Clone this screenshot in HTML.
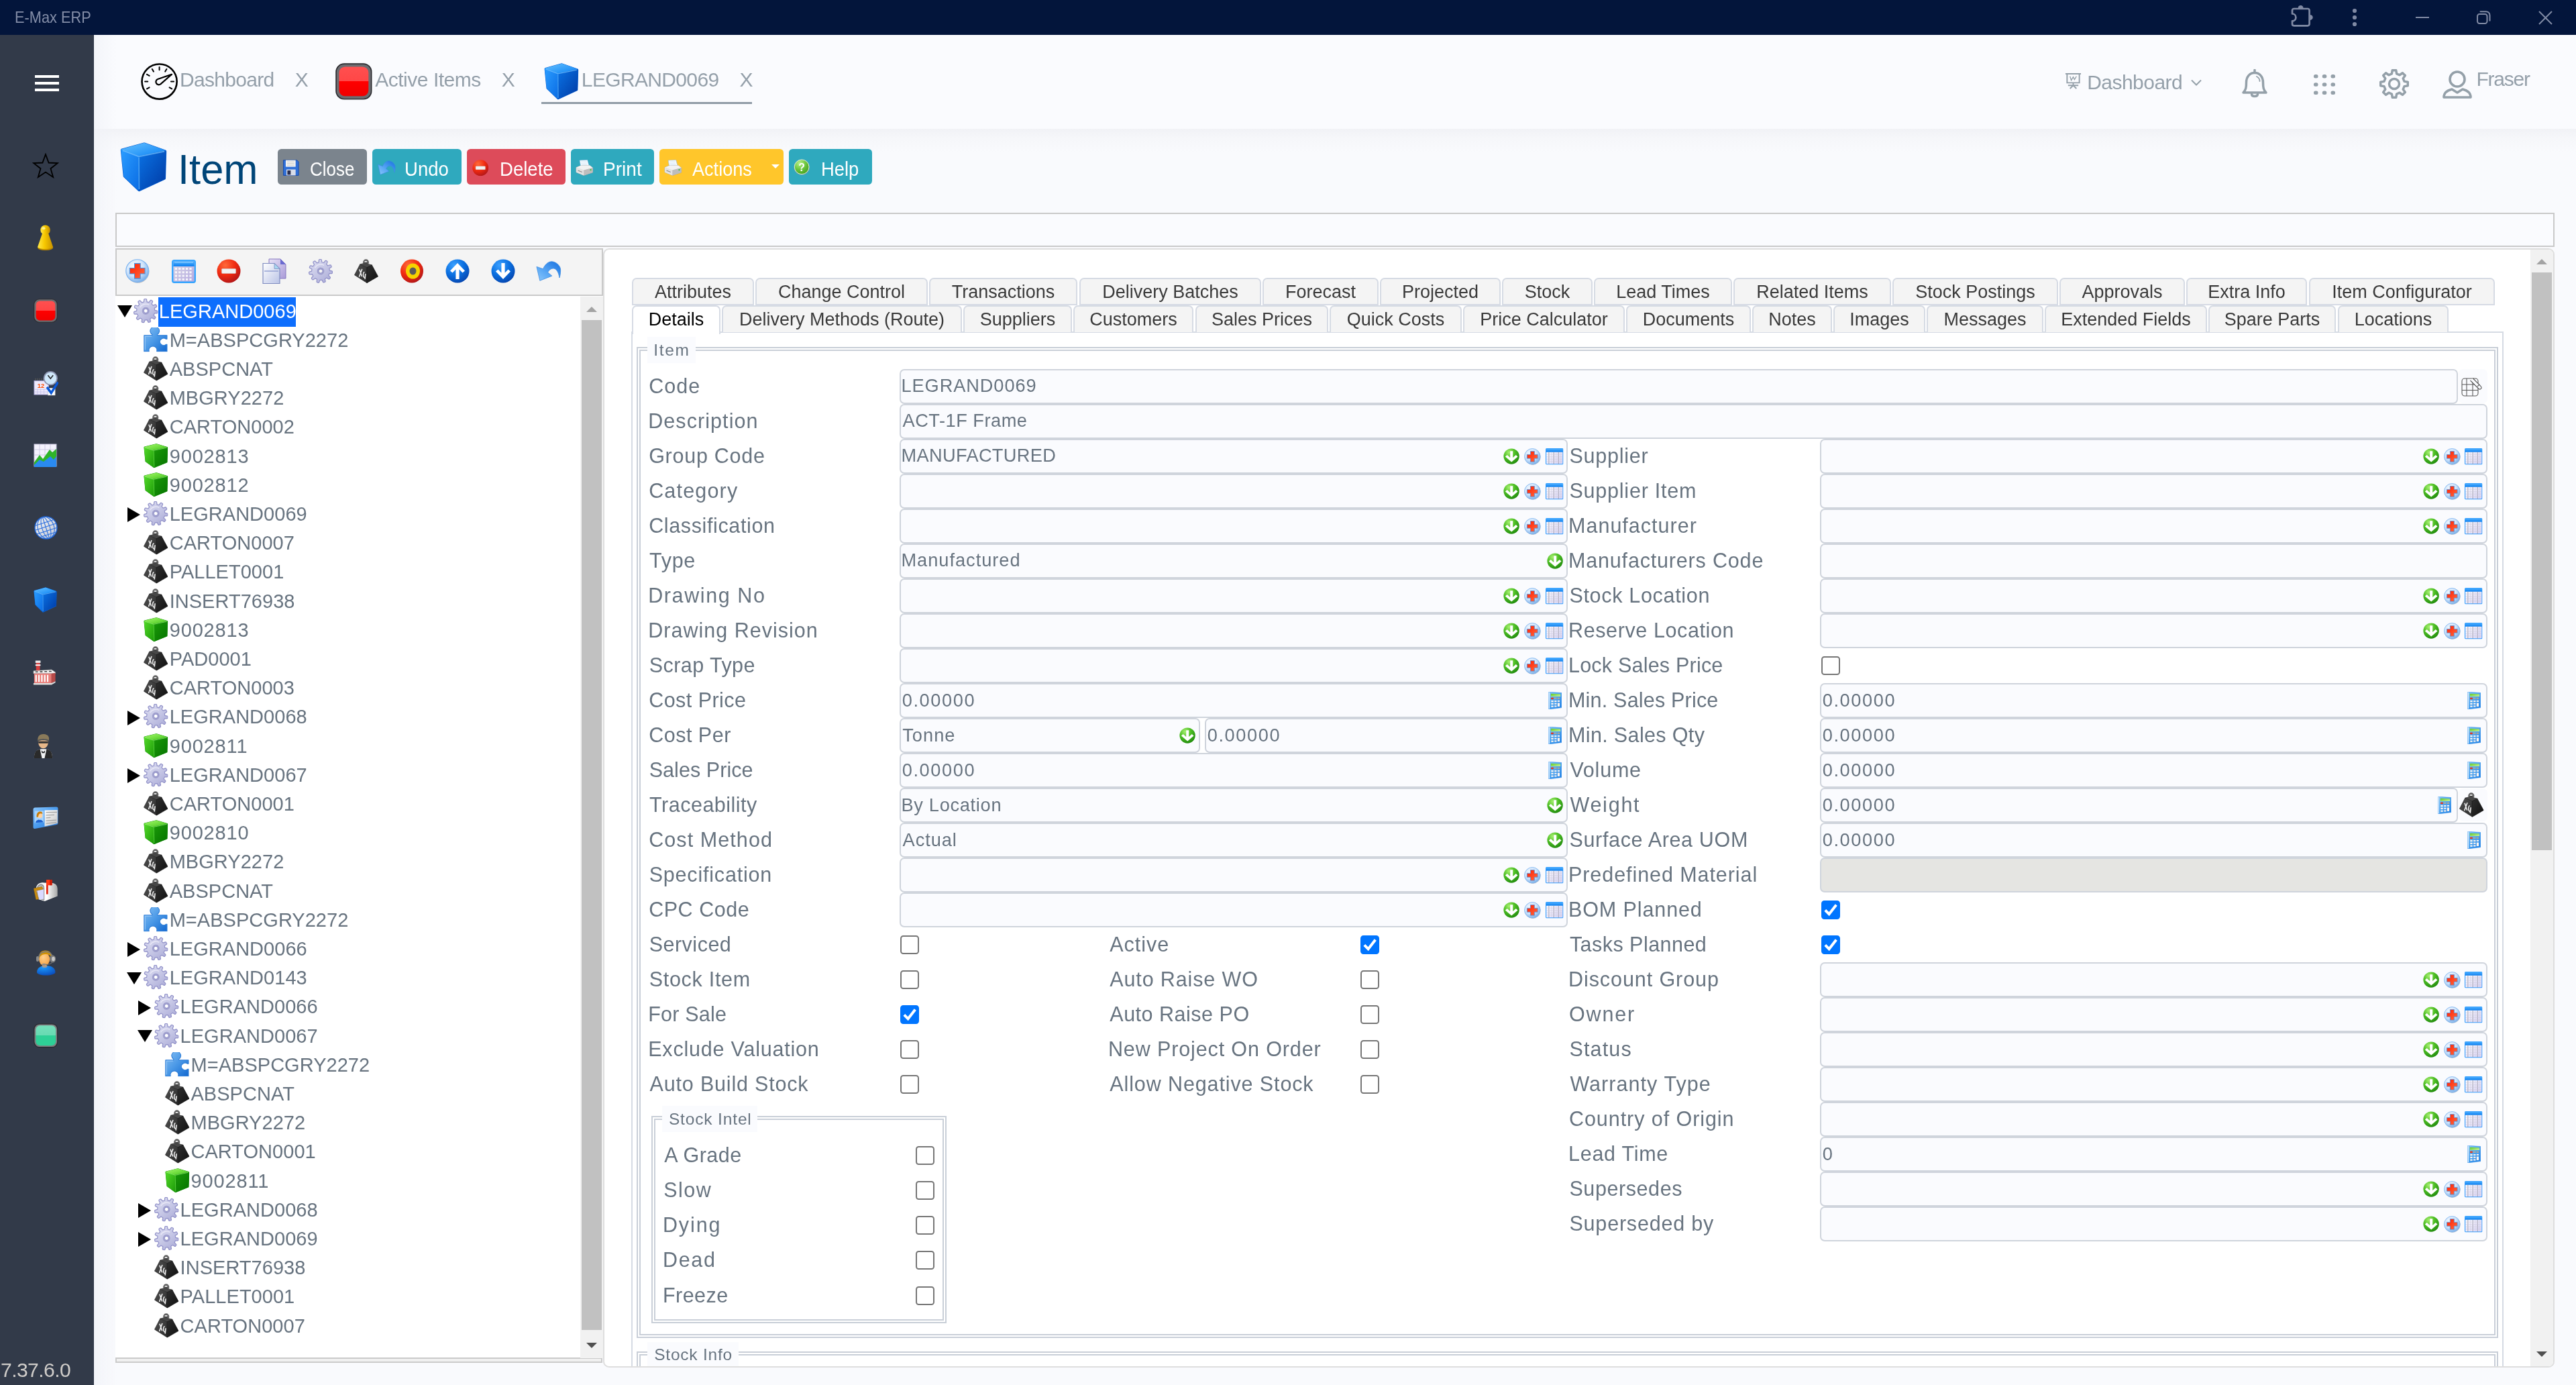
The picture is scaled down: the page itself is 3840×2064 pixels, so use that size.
<!DOCTYPE html><html><head><meta charset="utf-8"><title>E-Max ERP</title><style>
*{box-sizing:border-box;margin:0;padding:0}
html,body{width:3840px;height:2064px;overflow:hidden;background:#f9fafd;font-family:"Liberation Sans",sans-serif;}
.i{position:absolute;overflow:visible}
.abs{position:absolute}
#title{position:absolute;left:0;top:0;width:3840px;height:52px;background:#03153b}
#title .t{position:absolute;color:#848ea8;white-space:nowrap;line-height:30px}
#side{position:absolute;left:0;top:52px;width:140px;height:2012px;background:#323a49}
#ver{position:absolute;left:0;top:2024px;font-size:28px;color:#c3c8d0;white-space:nowrap}
#hdr{position:absolute;left:140px;top:52px;width:3700px;height:140px;background:#fafbfe}
#hshadow{position:absolute;left:140px;top:192px;width:3700px;height:36px;background:linear-gradient(#f1f2f6,#f6f7fa 40%,#f9fafd)}
#lshadow{position:absolute;left:140px;top:52px;width:34px;height:2012px;background:linear-gradient(90deg,rgba(241,243,248,.75),rgba(249,250,253,0))}
.ht{position:absolute;color:#95a0aa;white-space:nowrap;line-height:36px}
.btn{position:absolute;top:222px;height:53px;border-radius:5.5px;color:#fff;font-size:27px;white-space:nowrap}
.legt{position:absolute;color:#687480;white-space:nowrap;line-height:36px}
.fv{position:absolute;color:#687480;white-space:nowrap;line-height:36px}
.bt{position:absolute;color:#fff;white-space:nowrap;line-height:36px}
.lbl{position:absolute;color:#687480;white-space:nowrap;line-height:36px;letter-spacing:.75px}
.fld{position:absolute;height:52px;border:2px solid #cfd4dc;border-radius:7px;background:#fafbfe;font-size:27.2px;color:#687480;line-height:47px;padding-left:2.5px;white-space:nowrap;letter-spacing:.4px}
.cb{position:absolute;width:28px;height:28px;border:2px solid #767676;border-radius:4.5px;background:#fff}
.cb.on{background:#0075ff;border-color:#0075ff}
.tab{position:absolute;height:40px;border:2px solid #d6dbe4;border-bottom:none;border-radius:7px 7px 0 0;background:#f4f4f4;font-size:27px;color:#3a3a3a;text-align:center;line-height:38px;white-space:nowrap}
.tab.r1{top:414px;height:41px;border-bottom:2px solid #d6dbe4}
.tab.r2{top:455px;height:40px}
.tab.act{background:#fff;color:#000;height:43px;z-index:3}
.tr{position:absolute;font-size:29px;color:#687480;white-space:nowrap;line-height:43px;letter-spacing:.03px}
.tri{position:absolute;width:0;height:0}
.leg{position:absolute;background:#fafbfe;color:#5c6873;font-size:24.5px;white-space:nowrap;letter-spacing:.4px}
</style></head><body>
<div id="root" style="position:absolute;left:0;top:0;width:3840px;height:2064px;will-change:transform;transform:translateZ(0)">

<svg width="0" height="0" style="position:absolute">
<defs>
<radialGradient id="gGreen" cx="35%" cy="25%" r="80%"><stop offset="0" stop-color="#a6f070"/><stop offset=".45" stop-color="#4fbf26"/><stop offset="1" stop-color="#1f8a0c"/></radialGradient>
<radialGradient id="gPlus" cx="40%" cy="35%" r="70%"><stop offset="0" stop-color="#ffffff"/><stop offset=".55" stop-color="#cfe4fb"/><stop offset="1" stop-color="#6fa8e6"/></radialGradient>
<linearGradient id="gRedX" x1="0" y1="0" x2="1" y2="1"><stop offset="0" stop-color="#ff1e00"/><stop offset="1" stop-color="#ff6a40"/></linearGradient>
<linearGradient id="gTbl" x1="0" y1="0" x2="1" y2="1"><stop offset="0" stop-color="#ffffff"/><stop offset="1" stop-color="#d9d3f5"/></linearGradient>
<linearGradient id="gTbl2" x1="0" y1="0" x2="1" y2="1"><stop offset="0" stop-color="#d8d8e6"/><stop offset="1" stop-color="#b4a8e0"/></linearGradient><linearGradient id="gTblH" x1="0" y1="0" x2="0" y2="1"><stop offset="0" stop-color="#4fb0ff"/><stop offset="1" stop-color="#0b7ff0"/></linearGradient>
<linearGradient id="gCalc" x1="0" y1="0" x2="1" y2="1"><stop offset="0" stop-color="#8ccaf8"/><stop offset=".5" stop-color="#4aa2f0"/><stop offset="1" stop-color="#1c7ce2"/></linearGradient>
<radialGradient id="gRedB" cx="35%" cy="25%" r="85%"><stop offset="0" stop-color="#ff6a3a"/><stop offset=".5" stop-color="#f02a10"/><stop offset="1" stop-color="#a8141a"/></radialGradient>
<radialGradient id="gBlueB" cx="35%" cy="25%" r="85%"><stop offset="0" stop-color="#3aa0ff"/><stop offset=".5" stop-color="#0a6fe0"/><stop offset="1" stop-color="#0540a8"/></radialGradient>
<linearGradient id="gGear" x1="0" y1="0" x2="1" y2="1"><stop offset="0" stop-color="#dedff2"/><stop offset=".5" stop-color="#c6c7e6"/><stop offset="1" stop-color="#a6a6d4"/></linearGradient>
<linearGradient id="gPuz" x1="0" y1="0" x2="1" y2="1"><stop offset="0" stop-color="#86c0f4"/><stop offset=".5" stop-color="#4a98e6"/><stop offset="1" stop-color="#1268d0"/></linearGradient>
<linearGradient id="gcT" x1="0" y1="0" x2="1" y2="1"><stop offset="0" stop-color="#a4f86a"/><stop offset="1" stop-color="#3fc418"/></linearGradient>
<linearGradient id="gcL" x1="0" y1="0" x2="1" y2="1"><stop offset="0" stop-color="#52d828"/><stop offset="1" stop-color="#1c9a08"/></linearGradient>
<linearGradient id="gcR" x1="0" y1="0" x2="1" y2="1"><stop offset="0" stop-color="#1a9a08"/><stop offset="1" stop-color="#067400"/></linearGradient>
<linearGradient id="bcT" x1="0" y1="0" x2="1" y2="1"><stop offset="0" stop-color="#62c0ff"/><stop offset="1" stop-color="#0a80f4"/></linearGradient>
<linearGradient id="bcL" x1="0" y1="0" x2="1" y2="1"><stop offset="0" stop-color="#2a9cff"/><stop offset="1" stop-color="#0a6ce4"/></linearGradient>
<linearGradient id="bcR" x1="0" y1="0" x2="1" y2="1"><stop offset="0" stop-color="#0a72e4"/><stop offset="1" stop-color="#003aa4"/></linearGradient>
<linearGradient id="gUndo" x1="1" y1="0" x2="0" y2="1"><stop offset="0" stop-color="#1570e0"/><stop offset=".6" stop-color="#5aa8f5"/><stop offset="1" stop-color="#8cc8fb"/></linearGradient>
<linearGradient id="gRedSq" x1="0" y1="0" x2="0" y2="1"><stop offset="0" stop-color="#ff5050"/><stop offset=".5" stop-color="#ff4646"/><stop offset=".5" stop-color="#ff0000"/><stop offset="1" stop-color="#f00000"/></linearGradient>
<linearGradient id="gGrnSq" x1="0" y1="0" x2="0" y2="1"><stop offset="0" stop-color="#74dfba"/><stop offset=".5" stop-color="#68dab2"/><stop offset=".5" stop-color="#2ecf96"/><stop offset="1" stop-color="#2ecf96"/></linearGradient>
<linearGradient id="gPawn" x1="0" y1="0" x2="1" y2="0"><stop offset="0" stop-color="#ffe94a"/><stop offset=".45" stop-color="#f7c800"/><stop offset="1" stop-color="#c79000"/></linearGradient>
<linearGradient id="gCard" x1="0" y1="0" x2="1" y2="1"><stop offset="0" stop-color="#8cc8ff"/><stop offset=".5" stop-color="#4a9cf0"/><stop offset="1" stop-color="#2a7ce0"/></linearGradient><linearGradient id="gCardW" x1="0" y1="0" x2="1" y2="1"><stop offset="0" stop-color="#ffffff"/><stop offset="1" stop-color="#c4c4c4"/></linearGradient><linearGradient id="gMail" x1="0" y1="0" x2="1" y2="0"><stop offset="0" stop-color="#f4f4f4"/><stop offset=".5" stop-color="#ffffff"/><stop offset="1" stop-color="#a8a8a8"/></linearGradient><radialGradient id="gSupB" cx="35%" cy="20%" r="90%"><stop offset="0" stop-color="#1a9aff"/><stop offset="1" stop-color="#0a48b8"/></radialGradient><radialGradient id="gFace" cx="40%" cy="35%" r="75%"><stop offset="0" stop-color="#ffd08a"/><stop offset="1" stop-color="#f4a040"/></radialGradient><linearGradient id="gDoc" x1="0" y1="0" x2="1" y2="1"><stop offset="0" stop-color="#ffffff"/><stop offset="1" stop-color="#b9c3e6"/></linearGradient>
<linearGradient id="gDoc2" x1="0" y1="0" x2="1" y2="1"><stop offset="0" stop-color="#e8e2f6"/><stop offset="1" stop-color="#a99ad8"/></linearGradient>
<radialGradient id="gHelp" cx="35%" cy="25%" r="85%"><stop offset="0" stop-color="#b8f08a"/><stop offset=".5" stop-color="#6cc63c"/><stop offset="1" stop-color="#3f9a1c"/></radialGradient>
<linearGradient id="gWtL" x1="0" y1="0" x2="1" y2="1"><stop offset="0" stop-color="#505050"/><stop offset="1" stop-color="#2a2a2a"/></linearGradient><linearGradient id="gWtR" x1="0" y1="0" x2="1" y2="1"><stop offset="0" stop-color="#2e2e2e"/><stop offset="1" stop-color="#101010"/></linearGradient><linearGradient id="gLcd" x1="0" y1="0" x2="1" y2="1"><stop offset="0" stop-color="#5ec81e"/><stop offset="1" stop-color="#c8f2a8"/></linearGradient><linearGradient id="gWt" x1="0" y1="0" x2="1" y2="0"><stop offset="0" stop-color="#4a4a4a"/><stop offset="1" stop-color="#1c1c1c"/></linearGradient>
<linearGradient id="gGlobe" x1="0" y1="0" x2="1" y2="1"><stop offset="0" stop-color="#f4f4f4"/><stop offset="1" stop-color="#c4c8d4"/></linearGradient>

<symbol id="i-down" viewBox="0 0 24 24"><circle cx="12" cy="12" r="11.6" fill="url(#gGreen)"/><path d="M2.8,12.4 L5.6,9.9 L10.1,13.8 L10.1,4.1 L14.1,4.1 L14.1,13.8 L18.6,9.9 L21.4,12.4 L12.1,20.4Z" fill="#fff"/></symbol>
<symbol id="i-plus" viewBox="0 0 24 24"><circle cx="12.300" cy="12.500" r="11.300" fill="#70757e" opacity=".45"/><circle cx="11.800" cy="11.800" r="11.300" fill="url(#gPlus)" stroke="#7db4f0" stroke-width=".8"/><path d="M9,4.400h5.800v4.600h4.600v5.600h-4.600v4.800h-5.800v-4.800h-4.800v-5.600h4.800z" fill="url(#gRedX)" stroke="#3a96ee" stroke-width=".7"/></symbol>
<symbol id="i-table" viewBox="0 0 24 22"><rect x=".5" y=".5" width="23" height="21" rx="1" fill="url(#gTbl)" stroke="#2f9bff" stroke-width="1"/><rect x=".5" y=".5" width="23" height="4.6" fill="url(#gTblH)"/><path d="M4.4,5v16.4M11,5v16.4M17.4,5v16.4" stroke="#8c8c96" stroke-width=".7"/><path d="M1,8.2h22M1,11.4h22M1,14.6h22M1,17.8h22M7.7,5v16M14.2,5v16M20.6,5v16" stroke="#c9c6dc" stroke-width=".45"/></symbol>
<symbol id="i-table2" viewBox="0 0 36 35"><rect x="1.200" y="1.200" width="33.600" height="32.600" rx="2.500" fill="url(#gTbl2)" stroke="#36a6ff" stroke-width="2.400"/><rect x="2.400" y="2.400" width="31.200" height="7.600" fill="url(#gTblH)"/><path d="M4,4.200h28" stroke="#8fd0ff" stroke-width="1.200"/><g fill="#ffffff" opacity=".85"><rect x="4.800" y="12" width="3.200" height="3"/><rect x="10.200" y="12" width="3.200" height="3"/><rect x="15.600" y="12" width="3.200" height="3"/><rect x="21" y="12" width="3.200" height="3"/><rect x="26.400" y="12" width="3.200" height="3"/><rect x="4.800" y="17.300" width="3.200" height="3"/><rect x="10.200" y="17.300" width="3.200" height="3"/><rect x="15.600" y="17.300" width="3.200" height="3"/><rect x="21" y="17.300" width="3.200" height="3"/><rect x="26.400" y="17.300" width="3.200" height="3"/><rect x="4.800" y="22.600" width="3.200" height="3"/><rect x="10.200" y="22.600" width="3.200" height="3"/><rect x="15.600" y="22.600" width="3.200" height="3"/><rect x="21" y="22.600" width="3.200" height="3"/><rect x="26.400" y="22.600" width="3.200" height="3"/><rect x="4.800" y="27.900" width="3.200" height="3"/><rect x="10.200" y="27.900" width="3.200" height="3"/><rect x="15.600" y="27.900" width="3.200" height="3"/><rect x="21" y="27.900" width="3.200" height="3"/><rect x="26.400" y="27.900" width="3.200" height="3"/></g></symbol>
<symbol id="i-calc" viewBox="0 0 20 26"><path d="M0.300,1.200 Q0.300,0.200 1.500,0.200 L19.800,1.500 V23.600 L1.500,25.900 Q0.300,25.900 0.300,24.800Z" fill="url(#gCalc)" stroke="#2f8ae6" stroke-width=".5"/><path d="M0.600,1 L1.900,0.600 V25.500 L0.600,25Z" fill="#e6f2fd"/><path d="M3.800,2.700 L18.100,3.200 V7 L3.800,6.900Z" fill="url(#gLcd)"/><rect x="4" y="8.600" width="3.800" height="2.600" fill="#e23a1c"/><rect x="9.200" y="8.600" width="3.200" height="2.500" fill="#a8a8a0"/><rect x="13.800" y="8.600" width="3.200" height="2.400" fill="#a8a8a0"/><g fill="#fdf6f0"><rect x="4.300" y="13" width="3.300" height="2.200"/><rect x="9.200" y="13" width="3.200" height="2.100"/><rect x="13.800" y="12.800" width="3.200" height="2.100"/><rect x="4.300" y="16.800" width="3.300" height="2.200"/><rect x="9.200" y="16.700" width="3.200" height="2.100"/><rect x="13.800" y="16.500" width="3.200" height="5.400"/><rect x="4.300" y="20.600" width="3.300" height="2.200"/><rect x="9.200" y="20.400" width="3.200" height="2.100"/></g></symbol>
<symbol id="i-weight" viewBox="0 0 36 36"><ellipse cx="17.500" cy="5" rx="4.500" ry="4.700" fill="#626262"/><ellipse cx="17.500" cy="5.400" rx="2" ry="2.300" fill="#3e3e3e"/><ellipse cx="17.300" cy="4" rx="2.100" ry="1" fill="#f2f2f2"/><path d="M8.600,8.200 L15.500,6.400 L26.400,9.200 L19,12.600Z" fill="#484848" stroke="#484848" stroke-width="1.200" stroke-linejoin="round"/><path d="M8.600,8.200 L19,12.600 L19,35.600 L0.500,23.800Z" fill="url(#gWtL)" stroke="#2c2c2c" stroke-width=".8" stroke-linejoin="round"/><path d="M19,12.600 L26.400,9.200 L35.500,26 L19,35.600Z" fill="url(#gWtR)" stroke="#181818" stroke-width=".8" stroke-linejoin="round"/><path d="M8,16 L11.300,25.500 M11.600,15.400 L7.600,26 M14.800,19.500 C13,20.500 13,26.500 15,27.500 M16.800,22.500 L16,29.500" stroke="#ededed" stroke-width="1.600" fill="none" stroke-linecap="round"/></symbol>
<symbol id="i-gear" viewBox="0 0 36 36"><g transform="rotate(6 18 18)"><path d="M31.20,15.72 L34.69,16.08 L35.56,16.79 L35.56,19.21 L34.69,19.92 L31.20,20.28 L30.34,23.22 L33.08,25.41 L33.42,26.48 L32.12,28.51 L31.01,28.63 L27.87,27.06 L25.56,29.06 L26.68,32.39 L26.39,33.47 L24.20,34.47 L23.19,33.98 L21.41,30.96 L18.38,31.39 L17.52,34.79 L16.69,35.55 L14.31,35.21 L13.73,34.25 L13.86,30.74 L11.08,29.48 L8.52,31.87 L7.41,32.06 L5.59,30.48 L5.62,29.36 L7.63,26.48 L5.97,23.91 L2.53,24.54 L1.49,24.10 L0.81,21.79 L1.45,20.86 L4.69,19.53 L4.69,16.47 L1.45,15.14 L0.81,14.21 L1.49,11.90 L2.53,11.46 L5.97,12.09 L7.63,9.52 L5.62,6.64 L5.59,5.52 L7.41,3.94 L8.52,4.13 L11.08,6.52 L13.86,5.26 L13.73,1.75 L14.31,0.79 L16.69,0.45 L17.52,1.21 L18.38,4.61 L21.41,5.04 L23.19,2.02 L24.20,1.53 L26.39,2.53 L26.68,3.61 L25.56,6.94 L27.87,8.94 L31.01,7.37 L32.12,7.49 L33.42,9.52 L33.08,10.59 L30.34,12.78Z M14.90,18.00 a3.10,3.10 0 1,0 6.20,0 a3.10,3.10 0 1,0 -6.20,0Z" fill="url(#gGear)" stroke="#9090c8" stroke-width="1.200" stroke-linejoin="round" fill-rule="evenodd"/><circle cx="18" cy="18" r="4.600" fill="none" stroke="#9494c6" stroke-width="1.600" opacity=".8"/><path d="M9,14 A10,10 0 0,1 22,8.800" fill="none" stroke="#ecebf8" stroke-width="1.400" opacity=".9"/></g></symbol>
<symbol id="i-puzzle" viewBox="0 0 36 36"><path d="M0.800,11.500 H12.600 V10.200 A6.800,6.200 0 1,1 20.400,10.200 V11.500 H34.500 V17 H33 A5.500,5.100 0 1,0 33,25 H34.500 V35.300 H19.500 V34.200 A5.900,5.300 0 1,0 8,34.200 V35.300 H0.800Z" fill="url(#gPuz)" stroke="#2b7bd6" stroke-width="1" stroke-linejoin="round"/><path d="M2.300,33 V13 H12" fill="none" stroke="#a8d2fa" stroke-width=".9" opacity=".9"/></symbol>
<symbol id="i-gcube" viewBox="0 0 36 36" preserveAspectRatio="none"><path d="M1.700,5.700 L18.800,1.400 L34.500,6.200 L33.800,27 L15.600,34.500 L3.700,26Z" fill="#129008" stroke="#129008" stroke-width="2.400" stroke-linejoin="round"/><path d="M1.300,5.400 L18.800,1 L35,5.900 L15,10.200Z" fill="url(#gcT)" stroke="url(#gcT)" stroke-width="1" stroke-linejoin="round"/><path d="M1.200,5.700 L15,10.200 L15.600,35 L3.300,26.300Z" fill="url(#gcL)" stroke="url(#gcL)" stroke-width="1" stroke-linejoin="round"/><path d="M15,10.200 L35,6 L34.300,27.300 L15.600,35Z" fill="url(#gcR)" stroke="url(#gcR)" stroke-width="1" stroke-linejoin="round"/><path d="M15,10.700 L15.600,34.300" stroke="#7af05a" stroke-width=".9" opacity=".7"/><path d="M2,6 L15,10.200 L34.200,6.200" fill="none" stroke="#b8ff9a" stroke-width=".9" opacity=".6"/></symbol>
<symbol id="i-bcube" viewBox="0 0 36 38" preserveAspectRatio="none"><path d="M1.600,6 L18.500,1.400 L34.400,7 L33.800,27.600 L14.600,36.400 L3.600,25.800Z" fill="#0a62d4" stroke="#0a62d4" stroke-width="2.400" stroke-linejoin="round"/><path d="M1.300,5.700 L18.500,1 L34.800,6.700 L14.400,11Z" fill="url(#bcT)" stroke="url(#bcT)" stroke-width="1" stroke-linejoin="round"/><path d="M1.200,6 L14.400,11 L14.600,36.800 L3.300,26Z" fill="url(#bcL)" stroke="url(#bcL)" stroke-width="1" stroke-linejoin="round"/><path d="M14.400,11 L34.800,6.800 L34.200,27.800 L14.600,36.800Z" fill="url(#bcR)" stroke="url(#bcR)" stroke-width="1" stroke-linejoin="round"/><path d="M14.400,11.500 L14.600,36" stroke="#5ab4ff" stroke-width=".9" opacity=".75"/><path d="M2,6.300 L14.400,11 L34,7" fill="none" stroke="#7cc6ff" stroke-width=".9" opacity=".7"/></symbol>
<symbol id="i-minus" viewBox="0 0 36 36"><circle cx="18" cy="18" r="17.500" fill="url(#gRedB)"/><rect x="7.500" y="14.500" width="21" height="7" rx="1" fill="#f2f2f2" stroke="#c8c0c0" stroke-width=".6"/></symbol>
<symbol id="i-copy" viewBox="0 0 36 38"><path d="M10,1 h17 l8,8 v21 h-25Z" fill="url(#gDoc2)" stroke="#8678c0" stroke-width="1"/><path d="M27,1 v8 h8Z" fill="#6a6ad0"/><path d="M1,7.500 h17 l8,8 v22 h-25Z" fill="url(#gDoc)" stroke="#7f8cc0" stroke-width="1.200"/><path d="M18,7.500 v8 h8Z" fill="#a8d8f0" stroke="#7f8cc0" stroke-width=".8"/><path d="M3,19h21" stroke="#8f9cd0" stroke-width="1.400"/></symbol>
<symbol id="i-target" viewBox="0 0 36 36"><ellipse cx="18" cy="18" rx="17" ry="17.500" fill="url(#gRedB)"/><ellipse cx="19.500" cy="18" rx="10.500" ry="11.500" fill="#f6d200"/><ellipse cx="19.500" cy="18" rx="5" ry="5.500" fill="#5a5a5a"/></symbol>
<symbol id="i-up" viewBox="0 0 36 36"><circle cx="18" cy="18" r="17.500" fill="url(#gBlueB)"/><path d="M18,6 L29,17.500 L25.500,20.500 L20.600,15.500 V30 H15.400 V15.500 L10.500,20.500 L7,17.500Z" fill="#fff"/></symbol>
<symbol id="i-dn" viewBox="0 0 36 36"><circle cx="18" cy="18" r="17.500" fill="url(#gBlueB)"/><path d="M18,30 L29,18.500 L25.500,15.500 L20.600,20.500 V6 H15.400 V20.500 L10.500,15.500 L7,18.500Z" fill="#fff"/></symbol>
<symbol id="i-undo" viewBox="0 0 40 32"><path d="M0.700,9 L11,12.500 C14,5 20,0.500 25,0.800 C33,1.500 39.500,9 38.800,15 C38.800,20 38,24 37,26.700 C36,20 34,15 30,12.500 C26,10.500 21,13 18.500,18 L25.200,23.600 L5.900,31.200Z" fill="url(#gUndo)" stroke="#3a8ae0" stroke-width=".8" stroke-linejoin="round"/></symbol>
<symbol id="i-redsq" viewBox="0 0 36 36"><rect x=".7" y=".7" width="34.600" height="34.600" rx="8" fill="#6c6c70" stroke="#2a2a2e" stroke-width="1.100"/><rect x="3.600" y="3.600" width="28.800" height="28.800" rx="5.800" fill="url(#gRedSq)"/></symbol>
<symbol id="i-grnsq" viewBox="0 0 36 36"><rect x=".8" y=".8" width="34.400" height="34.400" rx="8" fill="#7c7c80" stroke="#26262a" stroke-width="1.200"/><rect x="3.300" y="3.300" width="29.400" height="29.400" rx="6" fill="url(#gGrnSq)"/></symbol>
<symbol id="i-gauge" viewBox="0 0 54 54"><circle cx="27" cy="27" r="25.500" fill="none" stroke="#000" stroke-width="2.600"/><g stroke="#000" stroke-width="2" stroke-linecap="round"><path d="M27,6v4M16.500,8.800l2,3.500M8.800,16.500l3.500,2M6,27h4M8.800,37.500l3.500,-2M37.500,8.800l-2,3.500M48,27h-4M45.200,37.500l-3.500,-2"/></g><path d="M45,16.500 L28.700,30.700 A4.200,4.200 0 1,1 24.500,23.500 Z" fill="#fafbfe" stroke="#000" stroke-width="2.200" stroke-linejoin="round"/></symbol>
<symbol id="i-star" viewBox="0 0 40 38"><path d="M20,2 L24.600,14.500 L38,15 L27.500,23.200 L31.200,36 L20,28.500 L8.800,36 L12.500,23.200 L2,15 L15.400,14.500Z" fill="none" stroke="#000" stroke-width="1.800" stroke-linejoin="miter"/></symbol>
<symbol id="i-pawn" viewBox="5.5 0.8 25 38.6" preserveAspectRatio="none"><ellipse cx="18" cy="35" rx="11.500" ry="4" fill="#b98600"/><path d="M6.500,34 L14,12 h8 L29.500,34 C26,38 10,38 6.500,34Z" fill="url(#gPawn)"/><circle cx="18" cy="8.500" r="7.200" fill="url(#gPawn)"/><ellipse cx="15.500" cy="6" rx="2.500" ry="2" fill="#fff6a8" opacity=".8"/></symbol>
<symbol id="i-cal" viewBox="0 0 38 38"><rect x="1" y="15" width="22" height="21" fill="#eeeafc" stroke="#a9a3d6" stroke-width="1"/><path d="M3,14v-3M6,14v-3M9,14v-3M12,14v-3M15,14v-3" stroke="#555" stroke-width="1.400"/><path d="M2,28h20M2,32h20M6,27v9M11,27v9M16,27v9" stroke="#c3bee6" stroke-width=".8"/><text x="6" y="26" font-family="Liberation Sans, sans-serif" font-weight="bold" font-size="9.500" fill="#ff4e00">12</text><rect x="22" y="26" width="11" height="11" fill="#fff" stroke="#bbb" stroke-width=".6"/><path d="M20.500,24.500 L27,33.500 L37.500,17" fill="none" stroke="#0a58d8" stroke-width="3.600"/><circle cx="26" cy="11" r="10" fill="#cfe8fb" stroke="#8c94b0" stroke-width="1.800"/><path d="M22,6.500 L26,11.500 L30,6.500" fill="none" stroke="#222" stroke-width="1.600"/></symbol>
<symbol id="i-chart" viewBox="0 0 36 36"><rect x="1" y="1" width="33" height="33" fill="#f4f2fd" stroke="#c9c6e0" stroke-width="1"/><path d="M1,9h33M1,17h33M1,25h33M9,1v33M17,1v33M25,1v33" stroke="#c9c6e0" stroke-width=".9"/><path d="M1,28 L9,17 L14,23 L24,9 L28,13 L34,8 V34 H1Z" fill="#2fb52a"/><path d="M1,32 L9,24 L15,27 L25,19 L30,24 L34,19 V35 H1Z" fill="#2a8af0"/></symbol>
<symbol id="i-globe" viewBox="0 0 36 36"><circle cx="18" cy="18" r="17" fill="url(#gGlobe)" stroke="#1d62d4" stroke-width="1.400"/><g fill="none" stroke="#2a6ede" stroke-width="1.100" transform="rotate(-18 18 18)"><ellipse cx="18" cy="18" rx="6" ry="17"/><ellipse cx="18" cy="18" rx="12.500" ry="17"/><path d="M18,1v34M3,10h30M1,16.500h34M1.500,23h33M5,29h26"/></g></symbol>
<symbol id="i-factory" viewBox="0 0 38 40"><rect x="6" y="3" width="6" height="14" fill="#d84040"/><rect x="5" y="1" width="8" height="3.500" fill="#eee"/><rect x="5" y="7" width="8" height="2" fill="#fff"/><path d="M2,17 L30,15 L36,19 V21 H2Z" fill="#f4f4f4" stroke="#999" stroke-width=".6"/><path d="M3,21 H30 V36 H3Z" fill="#e87c78"/><path d="M30,21 L36,20 V33 L30,36Z" fill="#b84a48"/><path d="M6,23v11M10.500,23v11M15,23v11M19.500,23v11M24,23v11" stroke="#fff" stroke-width="2.200"/><path d="M5,18.500h4M12,18.300h4M19,18h4M26,17.700h4" stroke="#444" stroke-width="1.600"/><path d="M2,36 H30 L36,33 V35 L30,38.500 H2Z" fill="#ddd"/></symbol>
<symbol id="i-man" viewBox="0 0 36 40"><path d="M4,40 C4,28 10,26 18,26 C26,26 32,28 32,40Z" fill="#f2f2f2"/><path d="M4,40 C4,30 8,27 13,26.500 L16,40Z M32,40 C32,30 28,27 23,26.500 L20,40Z" fill="#2a2a2a"/><path d="M15,28 l3,2.500 l3,-2.500 l-1,4 h-4Z" fill="#222"/><ellipse cx="18" cy="16" rx="7.500" ry="9" fill="#e8b88a"/><path d="M9.500,13 C9,5 14,2.500 19,3 C25,3.500 28,7 26.500,13 C22,10 14,10 9.500,13Z" fill="#8a7a5a"/><path d="M9,12.500 C14,9.500 22,9.500 27,12.500 L27,14.500 C22,12 14,12 9,14.500Z" fill="#555"/><rect x="10.500" y="14" width="15" height="3.200" rx="1.200" fill="#333"/></symbol>
<symbol id="i-card" viewBox="0 0 38 34"><path d="M0.500,4 Q0.500,1.600 3,1.500 L35,0.500 Q37.500,0.500 37.500,3 V24.500 Q37.500,26.500 35.500,27 L3,33 Q0.500,33.300 0.500,31Z" fill="url(#gCard)"/><path d="M17.500,5.500 L36.800,5 V25 L17.500,29.500Z" fill="url(#gCardW)"/><path d="M19.600,8.700 L36,8.300 M19.600,12.800 L32,12.300 M19.600,16.800 L26.500,16.400 M19.600,21.200 L35,20.200 M19.600,25.200 L35,23.700" stroke="#a2a2a2" stroke-width="1.300"/><path d="M2.700,6.600 L16.200,6.300 V23.700 L2.700,24.300Z" fill="#a8d4fc"/><path d="M4,24 C4.500,18 14.500,18 15.500,23.600Z" fill="#1a5fd0"/><circle cx="10.300" cy="13.200" r="3.900" fill="#ffd2a0"/><path d="M5.800,16 C4.500,9 9,6.800 12,7.600 C14,8 14.500,9.500 14.200,11 C12,9.500 9,10 8.400,13.500 C8.200,15 7.500,16 5.800,16Z" fill="#c87c08"/><path d="M9,18.400 L10.300,20 L11.600,18.400Z" fill="#bfe4fb"/></symbol>
<symbol id="i-mail" viewBox="0 0 36 32"><path d="M3.500,28 V14 C3.500,7 9,3.500 15,4.500 L28,5 C33,5.500 35.500,9 35.500,14 V24.500 L16.500,32Z" fill="url(#gMail)"/><path d="M4.600,27.200 V14.500 C4.600,9 8,6.600 11,6.600 C14,6.600 16,9 16,14 V31Z" fill="#8e8e92"/><path d="M6,26 V15 C6,10.500 8.500,8.300 11,8.300 C13.500,8.300 14.800,10.500 14.800,14 V29.800Z" fill="#c2c2c6"/><path d="M5,16.500 L15,14.500 V28.500 L8.500,29.500Z" fill="#dadaff"/><path d="M0,13 L12.300,10.300 L14.200,14 L3.800,16.200 L7.300,29 L3.600,29.600Z" fill="#c98c12" stroke="#9a6a08" stroke-width=".5"/><rect x="18.800" y="1.600" width="2.700" height="20" fill="#e22412"/><rect x="18.800" y="0" width="8.600" height="8.200" fill="#ff3a14"/><path d="M24,0 h3.400 v8.200 h-3.400Z" fill="#c81a08"/></symbol>
<symbol id="i-support" viewBox="0 0 30 38"><path d="M1,33 C1,26 7,23 14.500,23 C22,23 28.500,26 28.500,33 C28.500,35.500 22,37.500 14.500,37.500 C7,37.500 1,35.500 1,33Z" fill="url(#gSupB)"/><ellipse cx="12.500" cy="24" rx="4" ry="2" fill="#9a9a9a"/><ellipse cx="12.200" cy="13.500" rx="8" ry="10" fill="url(#gFace)"/><path d="M4.500,12 C3,3 9,0 14,0.500 C20,1 24,4 23,11 C21,7 17,5.500 13.500,6 C9,6.500 6,8 4.500,12Z" fill="#cf9208"/><path d="M4,10 C5,1 20,-1 24,9" fill="none" stroke="#7a7a7a" stroke-width="1.600"/><rect x="0" y="9" width="4" height="8" rx="2" fill="#8c8c8c"/><ellipse cx="24.500" cy="13" rx="4.600" ry="5.600" fill="#7c7c7c"/><ellipse cx="25.500" cy="13" rx="2.400" ry="3.200" fill="#c8c8c8"/><path d="M24,18 C22,21 17,21.500 12,21.300" fill="none" stroke="#6e6e6e" stroke-width="1.200"/><ellipse cx="11.500" cy="21.300" rx="3" ry="1.600" fill="#8a8a8a"/></symbol>

<symbol id="i-floppy" viewBox="0 0 26 26"><path d="M1.500,1.500 H22 L24.500,4 V24.500 H1.500Z" fill="#2f6fd8" stroke="#1a4aa8" stroke-width="1"/><rect x="5" y="1.500" width="15" height="10" fill="#f2f2f2"/><path d="M7,4h11M7,6.500h11M7,9h11" stroke="#c8c8c8" stroke-width=".9"/><rect x="6" y="15.500" width="14" height="9" fill="#d8dce8"/><rect x="7.500" y="17" width="5" height="6.500" fill="#2a2f50"/></symbol>
<symbol id="i-printer" viewBox="0 0 30 28"><path d="M7,1.500 L20,1 L23,12 L9,13.500Z" fill="#fff" stroke="#9fc4e8" stroke-width=".8"/><path d="M9,4 l10,-.5M9.500,6.500 l10,-.5M10,9 l10,-.5" stroke="#b9d8f2" stroke-width=".8"/><path d="M1,13.500 L8,10.500 L24,10 L29,14 L29,22 L14,27 L1,21.500Z" fill="#d8d8d8" stroke="#999" stroke-width=".6"/><path d="M1,13.500 L14,18 L29,14 L24,10 L8,10.500Z" fill="#f2f2f2"/><path d="M14,18 V27 L1,21.500 V13.500Z" fill="#e2e2e2"/><path d="M14,18 L29,14 V22 L14,27Z" fill="#bdbdbd"/><circle cx="25.500" cy="17.500" r="1.300" fill="#3fc040"/><path d="M4,18.500 l7,2.800" stroke="#888" stroke-width="1.300"/></symbol>
<symbol id="i-help" viewBox="0 0 26 26"><circle cx="13" cy="13" r="12.500" fill="#8a9aa0" opacity=".6"/><circle cx="13" cy="12.600" r="11.600" fill="url(#gHelp)" stroke="#e8f4e0" stroke-width="1"/><text x="13" y="19" text-anchor="middle" font-family="Liberation Sans, sans-serif" font-weight="bold" font-size="17" fill="#fff">?</text></symbol>
<symbol id="i-undo2" viewBox="0 0 40 32"><path d="M0.700,9 L11,12.500 C14,5 20,0.500 25,0.800 C33,1.500 39.500,9 38.800,15 C38.800,20 38,24 37,26.700 C36,20 34,15 30,12.500 C26,10.500 21,13 18.500,18 L25.200,23.600 L5.900,31.200Z" fill="url(#gUndo)" stroke="#3a8ae0" stroke-width=".8" stroke-linejoin="round"/></symbol>

<symbol id="i-bell" viewBox="0 0 40 44"><path d="M20,1.500v4" stroke="#94a0a9" stroke-width="3.500" stroke-linecap="round"/><path d="M3,35 C7,31 7.500,27 7.500,20 C7.500,11 13,5.500 20,5.500 C27,5.500 32.500,11 32.500,20 C32.500,27 33,31 37,35Z" fill="none" stroke="#94a0a9" stroke-width="3.500" stroke-linejoin="round"/><path d="M15.500,37.500 C16,41.500 24,41.500 24.500,37.500" fill="none" stroke="#94a0a9" stroke-width="3.500" stroke-linecap="round"/><path d="M23,11 C26,12.500 27.500,15 27.500,18" fill="none" stroke="#94a0a9" stroke-width="1.800" stroke-linecap="round"/></symbol>
<symbol id="i-grid" viewBox="0 0 32 32"><g fill="#94a0a9"><rect x="0" y="1" width="6.500" height="5.500" rx="2.500"/><rect x="12.800" y="1" width="6.500" height="5.500" rx="2.500"/><rect x="25.500" y="1" width="6.500" height="5.500" rx="2.500"/><rect x="0" y="13.300" width="6.500" height="5.500" rx="2.500"/><rect x="12.800" y="13.300" width="6.500" height="5.500" rx="2.500"/><rect x="25.500" y="13.300" width="6.500" height="5.500" rx="2.500"/><rect x="0" y="25.500" width="6.500" height="5.500" rx="2.500"/><rect x="12.800" y="25.500" width="6.500" height="5.500" rx="2.500"/><rect x="25.500" y="25.500" width="6.500" height="5.500" rx="2.500"/></g></symbol>
<symbol id="i-cog" viewBox="0 0 44 44"><path d="M18.38,6.93 L19.27,1.68 L24.73,1.68 L25.62,6.93 L30.10,8.78 L34.44,5.70 L38.30,9.56 L35.22,13.90 L37.07,18.38 L42.32,19.27 L42.32,24.73 L37.07,25.62 L35.22,30.10 L38.30,34.44 L34.44,38.30 L30.10,35.22 L25.62,37.07 L24.73,42.32 L19.27,42.32 L18.38,37.07 L13.90,35.22 L9.56,38.30 L5.70,34.44 L8.78,30.10 L6.93,25.62 L1.68,24.73 L1.68,19.27 L6.93,18.38 L8.78,13.90 L5.70,9.56 L9.56,5.70 L13.90,8.78Z" fill="none" stroke="#94a0a9" stroke-width="3.500" stroke-linejoin="round"/><circle cx="22" cy="22" r="7.500" fill="none" stroke="#94a0a9" stroke-width="3.500"/></symbol>
<symbol id="i-user" viewBox="0 0 44 42"><circle cx="22" cy="13" r="11" fill="none" stroke="#94a0a9" stroke-width="3.600"/><path d="M2,40 C2,33 8,29.500 14,28 L22,33 L30,28 C36,29.500 42,33 42,40Z" fill="none" stroke="#94a0a9" stroke-width="3.600" stroke-linejoin="round"/></symbol>
<symbol id="i-pres" viewBox="0 0 26 26"><g fill="none" stroke="#94a0a9" stroke-width="2"><path d="M1,2h24M3.500,2v14h19v-14M13,16v4M13,20l-5,5M13,20l5,5M5,20h16"/><path d="M8,6l2,6l3,-5l2,4l3,-5" stroke-width="1.400"/></g></symbol>
<symbol id="i-chev" viewBox="0 0 16 10"><path d="M1,1.500 L8,8.500 L15,1.500" fill="none" stroke="#94a0a9" stroke-width="2"/></symbol>
<symbol id="i-gridbtn" viewBox="0 0 32 32"><g fill="none" stroke="#5a5a5a" stroke-width="1.100"><rect x="1" y="4" width="24" height="26" rx="4"/><path d="M1,13h24M1,21.500h24M8,4v26M17,4v26"/><path d="M14.500,3.500 L27,16 a2.500,2.500 0 0,0 3.500,-3.500 L18,0" fill="#fafbfe" transform="translate(-1,3.500)"/><path d="M25,12.500 l3.300,-3.300" transform="translate(-1,3.500)"/></g></symbol>
</defs></svg>

<div id="title"><div class="t" style="left:21.50px;top:10.5px;font-size:23.4px;transform-origin:0 50%;transform:scaleX(0.9304);">E-Max ERP</div>
<svg class="i" style="left:3412px;top:6px;width:40px;height:40px" viewBox="0 0 40 40"><path d="M7.500,7 H28.100 a2.500,2.500 0 0 1 2.500,2.500 V29.800 a2.500,2.500 0 0 1 -2.500,2.500 H7.500 a2.500,2.500 0 0 1 -2.500,-2.500 V25.300 A5.400,5.400 0 0 0 5,14.500 V9.500 a2.500,2.500 0 0 1 2.500,-2.500Z" fill="none" stroke="#808aa4" stroke-width="2.700" stroke-linejoin="round"/><path d="M13.600,6.500 a4,4.500 0 0 1 8,0Z" fill="#808aa4"/><path d="M31.200,15.900 a4.500,4 0 0 1 0,8Z" fill="#808aa4"/></svg>
<svg class="i" style="left:3500px;top:10px;width:20px;height:32px" viewBox="0 0 20 32"><circle cx="10" cy="6" r="3.100" fill="#808aa4"/><circle cx="10" cy="16" r="3.100" fill="#808aa4"/><circle cx="10" cy="26" r="3.100" fill="#808aa4"/></svg>
<div class="abs" style="left:3601px;top:25px;width:20px;height:2px;background:#808aa4"></div>
<svg class="i" style="left:3690px;top:13px;width:26px;height:26px" viewBox="0 0 26 26"><rect x="3" y="8" width="14.500" height="14" rx="3.200" fill="none" stroke="#808aa4" stroke-width="2"/><path d="M7.500,4.200 h8.500 a5.500,5.500 0 0 1 5.500,5.500 v8" fill="none" stroke="#808aa4" stroke-width="2" stroke-linecap="round"/></svg>
<svg class="i" style="left:3783.5px;top:15.500px;width:21px;height:21px" viewBox="0 0 21 21"><path d="M1,1 L20,20 M20,1 L1,20" stroke="#808aa4" stroke-width="2"/></svg>
</div>
<div id="side"></div>
<div class="abs" style="left:52px;top:112.0px;width:36px;height:3.6px;background:#fff"></div>
<div class="abs" style="left:52px;top:122.2px;width:36px;height:3.6px;background:#fff"></div>
<div class="abs" style="left:52px;top:132.4px;width:36px;height:3.6px;background:#fff"></div>
<svg class="i" style="left:47.5px;top:227.5px;width:40.0px;height:38.0px;"><use href="#i-star"/></svg>
<svg class="i" style="left:54.9px;top:335.4px;width:25.2px;height:38.6px;"><use href="#i-pawn"/></svg>
<svg class="i" style="left:49.5px;top:444.5px;width:36.0px;height:36.0px;"><use href="#i-redsq"/></svg>
<svg class="i" style="left:49.5px;top:552.5px;width:37.0px;height:37.0px;"><use href="#i-cal"/></svg>
<svg class="i" style="left:49.5px;top:661.0px;width:36.0px;height:36.0px;"><use href="#i-chart"/></svg>
<svg class="i" style="left:50.5px;top:768.5px;width:35.0px;height:35.0px;"><use href="#i-globe"/></svg>
<svg class="i" style="left:50.0px;top:875.0px;width:35.0px;height:38.0px;"><use href="#i-bcube"/></svg>
<svg class="i" style="left:48.4px;top:982.5px;width:36.5px;height:39.5px;"><use href="#i-factory"/></svg>
<svg class="i" style="left:46.6px;top:1091.0px;width:35.0px;height:39.0px;"><use href="#i-man"/></svg>
<svg class="i" style="left:48.9px;top:1202.0px;width:38.0px;height:34.0px;"><use href="#i-card"/></svg>
<svg class="i" style="left:50.0px;top:1311.0px;width:36.4px;height:32.0px;"><use href="#i-mail"/></svg>
<svg class="i" style="left:53.8px;top:1416.0px;width:30.0px;height:38.0px;"><use href="#i-support"/></svg>
<svg class="i" style="left:49.5px;top:1525.0px;width:36.5px;height:36.5px;"><use href="#i-grnsq"/></svg>
<div class="abs" style="left:0.98px;top:2023.5px;font-size:30.2px;letter-spacing:-0.626px;color:#cfccc9;white-space:nowrap;line-height:36px;">7.37.6.0</div>
<div id="hdr"></div><div id="hshadow"></div><div id="lshadow"></div>
<svg class="i" style="left:210.3px;top:94.0px;width:55.2px;height:55.2px;"><use href="#i-gauge"/></svg>
<div class="ht" style="left:268.06px;top:101.0px;font-size:30px;letter-spacing:-0.692px;">Dashboard</div>
<div class="ht" style="left:439.73px;top:101.0px;font-size:30px;letter-spacing:0.000px;">X</div>
<svg class="i" style="left:500.3px;top:94.0px;width:54.8px;height:54.8px;"><use href="#i-redsq"/></svg>
<div class="ht" style="left:559.20px;top:101.0px;font-size:30px;letter-spacing:-0.476px;">Active Items</div>
<div class="ht" style="left:747.73px;top:101.0px;font-size:30px;letter-spacing:0.000px;">X</div>
<svg class="i" style="left:811.0px;top:94.3px;width:51.8px;height:54.8px;"><use href="#i-bcube"/></svg>
<div class="ht" style="left:866.86px;top:101.0px;font-size:30px;letter-spacing:-0.651px;">LEGRAND0069</div>
<div class="ht" style="left:1102.53px;top:101.0px;font-size:30px;letter-spacing:0.000px;">X</div>
<div class="abs" style="left:807px;top:152px;width:314px;height:3px;background:#8f9ba6"></div>
<svg class="i" style="left:3078.0px;top:108.0px;width:25.0px;height:25.0px;"><use href="#i-pres"/></svg>
<div class="ht" style="left:3111.26px;top:104.5px;font-size:30px;letter-spacing:-0.542px;">Dashboard</div>
<svg class="i" style="left:3266.0px;top:118.0px;width:16.0px;height:10.0px;"><use href="#i-chev"/></svg>
<svg class="i" style="left:3341.0px;top:103.0px;width:40.0px;height:44.0px;"><use href="#i-bell"/></svg>
<svg class="i" style="left:3449.0px;top:109.5px;width:32.0px;height:32.0px;"><use href="#i-grid"/></svg>
<svg class="i" style="left:3546.5px;top:103.0px;width:44.0px;height:44.0px;"><use href="#i-cog"/></svg>
<svg class="i" style="left:3640.5px;top:104.5px;width:44.0px;height:42.0px;"><use href="#i-user"/></svg>
<div class="ht" style="left:3691.56px;top:100.0px;font-size:30px;letter-spacing:-1.257px;">Fraser</div>
<svg class="i" style="left:179.3px;top:211.5px;width:70.0px;height:74.0px;"><use href="#i-bcube"/></svg>
<div class="abs" style="left:264.80px;top:206.5px;font-size:62.5px;transform-origin:0 50%;transform:scaleX(0.9830);color:#004578;line-height:90px;white-space:nowrap;">Item</div>
<div class="btn" style="left:414px;width:133px;background:#7b848d"></div>
<div class="bt" style="left:461.58px;top:234.0px;font-size:28.6px;transform-origin:0 50%;transform:scaleX(0.9077);">Close</div>
<svg class="i" style="left:421.0px;top:236.8px;width:25.6px;height:26.1px;"><use href="#i-floppy"/></svg>
<div class="btn" style="left:555px;width:133px;background:#2fa9be"></div>
<div class="bt" style="left:603.08px;top:234.0px;font-size:28.6px;transform-origin:0 50%;transform:scaleX(0.9629);">Undo</div>
<svg class="i" style="left:562.5px;top:239.0px;width:27.0px;height:22.0px;"><use href="#i-undo2"/></svg>
<div class="btn" style="left:696px;width:147px;background:#dd4b5a"></div>
<div class="bt" style="left:744.65px;top:234.0px;font-size:28.6px;transform-origin:0 50%;transform:scaleX(0.9637);">Delete</div>
<svg class="i" style="left:703.5px;top:237.5px;width:24.5px;height:24.5px;"><use href="#i-minus"/></svg>
<div class="btn" style="left:851px;width:124px;background:#2fa9be"></div>
<div class="bt" style="left:899.21px;top:234.0px;font-size:28.6px;transform-origin:0 50%;transform:scaleX(0.9811);">Print</div>
<svg class="i" style="left:857.5px;top:236.8px;width:26.5px;height:26.1px;"><use href="#i-printer"/></svg>
<div class="btn" style="left:983px;width:185px;background:#ffc62b"></div>
<div class="bt" style="left:1031.80px;top:234.0px;font-size:28.6px;transform-origin:0 50%;transform:scaleX(0.9473);">Actions</div>
<svg class="i" style="left:989.5px;top:236.8px;width:26.5px;height:26.1px;"><use href="#i-printer"/></svg>
<div class="btn" style="left:1176px;width:124px;background:#2fa9be"></div>
<div class="bt" style="left:1224.36px;top:234.0px;font-size:28.6px;transform-origin:0 50%;transform:scaleX(0.9580);">Help</div>
<svg class="i" style="left:1183.4px;top:237.3px;width:24.3px;height:24.3px;"><use href="#i-help"/></svg>
<div class="tri" style="left:1150.3px;top:245.3px;border-left:6.800px solid transparent;border-right:6.800px solid transparent;border-top:6.800px solid #fff"></div>
<div class="abs" style="left:172px;top:317px;width:3636px;height:51px;border:2px solid #c9c9c9;background:#fafbfe"></div>
<div class="abs" style="left:172px;top:370px;width:727px;height:71px;border:2px solid #c9c9c9;background:#f4f4f4"></div>
<div class="abs" style="left:172px;top:441px;width:727px;height:1583px;background:#fff"></div>
<div class="abs" style="left:172px;top:2023px;width:726px;height:8px;border:2px solid #cbcbcb;background:#f0f0f0"></div>
<svg class="i" style="left:187.3px;top:386.0px;width:36.0px;height:36.0px;"><use href="#i-plus"/></svg>
<svg class="i" style="left:255.9px;top:386.5px;width:36.0px;height:35.0px;"><use href="#i-table2"/></svg>
<svg class="i" style="left:323.4px;top:386.0px;width:36.0px;height:36.0px;"><use href="#i-minus"/></svg>
<svg class="i" style="left:391.4px;top:385.0px;width:36.0px;height:38.0px;"><use href="#i-copy"/></svg>
<svg class="i" style="left:459.5px;top:386.0px;width:36.0px;height:36.0px;"><use href="#i-gear"/></svg>
<svg class="i" style="left:527.5px;top:386.0px;width:36.0px;height:36.0px;"><use href="#i-weight"/></svg>
<svg class="i" style="left:595.6px;top:386.0px;width:36.0px;height:36.0px;"><use href="#i-target"/></svg>
<svg class="i" style="left:663.6px;top:386.0px;width:36.0px;height:36.0px;"><use href="#i-up"/></svg>
<svg class="i" style="left:731.7px;top:386.0px;width:36.0px;height:36.0px;"><use href="#i-dn"/></svg>
<svg class="i" style="left:798.8px;top:389.0px;width:38.0px;height:30.0px;"><use href="#i-undo"/></svg>
<div class="abs" style="left:865px;top:442px;width:34px;height:1582px;background:#f1f1f1"></div>
<div class="abs" style="left:867px;top:477px;width:30px;height:1505px;background:#c1c1c1"></div>
<div class="tri" style="left:874px;top:457px;border-left:8px solid transparent;border-right:8px solid transparent;border-bottom:8px solid #a3a3a3"></div>
<div class="tri" style="left:874px;top:2001px;border-left:8px solid transparent;border-right:8px solid transparent;border-top:8px solid #505050"></div>
<svg class="i" style="left:199.3px;top:444.5px;width:36.5px;height:36.5px;"><use href="#i-gear"/></svg>
<div class="abs" style="left:236px;top:443.3px;width:205px;height:43.5px;background:#0d6efd"></div>
<div class="tr" style="left:236.8px;top:442.6px;color:#fff;" id="tr0">LEGRAND0069</div>
<div class="tri" style="left:175.0px;top:455.3px;border-left:11px solid transparent;border-right:11px solid transparent;border-top:18.500px solid #000"></div>
<svg class="i" style="left:213.7px;top:487.7px;width:36.5px;height:36.5px;"><use href="#i-puzzle"/></svg>
<div class="tr" style="left:252.7px;top:485.8px;" id="tr1">M=ABSPCGRY2272</div>
<svg class="i" style="left:213.7px;top:530.9px;width:36.5px;height:36.5px;"><use href="#i-weight"/></svg>
<div class="tr" style="left:252.7px;top:529.0px;" id="tr2">ABSPCNAT</div>
<svg class="i" style="left:213.7px;top:574.1px;width:36.5px;height:36.5px;"><use href="#i-weight"/></svg>
<div class="tr" style="left:252.7px;top:572.2px;" id="tr3">MBGRY2272</div>
<svg class="i" style="left:213.7px;top:617.3px;width:36.5px;height:36.5px;"><use href="#i-weight"/></svg>
<div class="tr" style="left:252.7px;top:615.4px;" id="tr4">CARTON0002</div>
<svg class="i" style="left:213.7px;top:660.5px;width:36.5px;height:36.5px;"><use href="#i-gcube"/></svg>
<div class="tr" style="left:252.7px;top:658.6px;letter-spacing:.85px;" id="tr5">9002813</div>
<svg class="i" style="left:213.7px;top:703.7px;width:36.5px;height:36.5px;"><use href="#i-gcube"/></svg>
<div class="tr" style="left:252.7px;top:701.8px;letter-spacing:.85px;" id="tr6">9002812</div>
<svg class="i" style="left:213.7px;top:746.9px;width:36.5px;height:36.5px;"><use href="#i-gear"/></svg>
<div class="tr" style="left:252.7px;top:745.0px;" id="tr7">LEGRAND0069</div>
<div class="tri" style="left:189.9px;top:756.2px;border-top:11px solid transparent;border-bottom:11px solid transparent;border-left:19.500px solid #000"></div>
<svg class="i" style="left:213.7px;top:790.1px;width:36.5px;height:36.5px;"><use href="#i-weight"/></svg>
<div class="tr" style="left:252.7px;top:788.2px;" id="tr8">CARTON0007</div>
<svg class="i" style="left:213.7px;top:833.3px;width:36.5px;height:36.5px;"><use href="#i-weight"/></svg>
<div class="tr" style="left:252.7px;top:831.4px;" id="tr9">PALLET0001</div>
<svg class="i" style="left:213.7px;top:876.5px;width:36.5px;height:36.5px;"><use href="#i-weight"/></svg>
<div class="tr" style="left:252.7px;top:874.6px;" id="tr10">INSERT76938</div>
<svg class="i" style="left:213.7px;top:919.7px;width:36.5px;height:36.5px;"><use href="#i-gcube"/></svg>
<div class="tr" style="left:252.7px;top:917.8px;letter-spacing:.85px;" id="tr11">9002813</div>
<svg class="i" style="left:213.7px;top:962.9px;width:36.5px;height:36.5px;"><use href="#i-weight"/></svg>
<div class="tr" style="left:252.7px;top:961.0px;" id="tr12">PAD0001</div>
<svg class="i" style="left:213.7px;top:1006.1px;width:36.5px;height:36.5px;"><use href="#i-weight"/></svg>
<div class="tr" style="left:252.7px;top:1004.2px;" id="tr13">CARTON0003</div>
<svg class="i" style="left:213.7px;top:1049.3px;width:36.5px;height:36.5px;"><use href="#i-gear"/></svg>
<div class="tr" style="left:252.7px;top:1047.4px;" id="tr14">LEGRAND0068</div>
<div class="tri" style="left:189.9px;top:1058.6px;border-top:11px solid transparent;border-bottom:11px solid transparent;border-left:19.500px solid #000"></div>
<svg class="i" style="left:213.7px;top:1092.5px;width:36.5px;height:36.5px;"><use href="#i-gcube"/></svg>
<div class="tr" style="left:252.7px;top:1090.6px;letter-spacing:.85px;" id="tr15">9002811</div>
<svg class="i" style="left:213.7px;top:1135.7px;width:36.5px;height:36.5px;"><use href="#i-gear"/></svg>
<div class="tr" style="left:252.7px;top:1133.8px;" id="tr16">LEGRAND0067</div>
<div class="tri" style="left:189.9px;top:1145.0px;border-top:11px solid transparent;border-bottom:11px solid transparent;border-left:19.500px solid #000"></div>
<svg class="i" style="left:213.7px;top:1178.9px;width:36.5px;height:36.5px;"><use href="#i-weight"/></svg>
<div class="tr" style="left:252.7px;top:1177.0px;" id="tr17">CARTON0001</div>
<svg class="i" style="left:213.7px;top:1222.1px;width:36.5px;height:36.5px;"><use href="#i-gcube"/></svg>
<div class="tr" style="left:252.7px;top:1220.2px;letter-spacing:.85px;" id="tr18">9002810</div>
<svg class="i" style="left:213.7px;top:1265.3px;width:36.5px;height:36.5px;"><use href="#i-weight"/></svg>
<div class="tr" style="left:252.7px;top:1263.4px;" id="tr19">MBGRY2272</div>
<svg class="i" style="left:213.7px;top:1308.5px;width:36.5px;height:36.5px;"><use href="#i-weight"/></svg>
<div class="tr" style="left:252.7px;top:1306.6px;" id="tr20">ABSPCNAT</div>
<svg class="i" style="left:213.7px;top:1351.7px;width:36.5px;height:36.5px;"><use href="#i-puzzle"/></svg>
<div class="tr" style="left:252.7px;top:1349.8px;" id="tr21">M=ABSPCGRY2272</div>
<svg class="i" style="left:213.7px;top:1394.9px;width:36.5px;height:36.5px;"><use href="#i-gear"/></svg>
<div class="tr" style="left:252.7px;top:1393.0px;" id="tr22">LEGRAND0066</div>
<div class="tri" style="left:189.9px;top:1404.2px;border-top:11px solid transparent;border-bottom:11px solid transparent;border-left:19.500px solid #000"></div>
<svg class="i" style="left:213.7px;top:1438.1px;width:36.5px;height:36.5px;"><use href="#i-gear"/></svg>
<div class="tr" style="left:252.7px;top:1436.2px;" id="tr23">LEGRAND0143</div>
<div class="tri" style="left:189.4px;top:1448.9px;border-left:11px solid transparent;border-right:11px solid transparent;border-top:18.500px solid #000"></div>
<svg class="i" style="left:229.6px;top:1481.3px;width:36.5px;height:36.5px;"><use href="#i-gear"/></svg>
<div class="tr" style="left:268.6px;top:1479.4px;" id="tr24">LEGRAND0066</div>
<div class="tri" style="left:205.8px;top:1490.6px;border-top:11px solid transparent;border-bottom:11px solid transparent;border-left:19.500px solid #000"></div>
<svg class="i" style="left:229.6px;top:1524.5px;width:36.5px;height:36.5px;"><use href="#i-gear"/></svg>
<div class="tr" style="left:268.6px;top:1522.6px;" id="tr25">LEGRAND0067</div>
<div class="tri" style="left:205.3px;top:1535.3px;border-left:11px solid transparent;border-right:11px solid transparent;border-top:18.500px solid #000"></div>
<svg class="i" style="left:245.5px;top:1567.7px;width:36.5px;height:36.5px;"><use href="#i-puzzle"/></svg>
<div class="tr" style="left:284.5px;top:1565.8px;" id="tr26">M=ABSPCGRY2272</div>
<svg class="i" style="left:245.5px;top:1610.9px;width:36.5px;height:36.5px;"><use href="#i-weight"/></svg>
<div class="tr" style="left:284.5px;top:1609.0px;" id="tr27">ABSPCNAT</div>
<svg class="i" style="left:245.5px;top:1654.1px;width:36.5px;height:36.5px;"><use href="#i-weight"/></svg>
<div class="tr" style="left:284.5px;top:1652.2px;" id="tr28">MBGRY2272</div>
<svg class="i" style="left:245.5px;top:1697.3px;width:36.5px;height:36.5px;"><use href="#i-weight"/></svg>
<div class="tr" style="left:284.5px;top:1695.4px;" id="tr29">CARTON0001</div>
<svg class="i" style="left:245.5px;top:1740.5px;width:36.5px;height:36.5px;"><use href="#i-gcube"/></svg>
<div class="tr" style="left:284.5px;top:1738.6px;letter-spacing:.85px;" id="tr30">9002811</div>
<svg class="i" style="left:229.6px;top:1783.7px;width:36.5px;height:36.5px;"><use href="#i-gear"/></svg>
<div class="tr" style="left:268.6px;top:1781.8px;" id="tr31">LEGRAND0068</div>
<div class="tri" style="left:205.8px;top:1793.0px;border-top:11px solid transparent;border-bottom:11px solid transparent;border-left:19.500px solid #000"></div>
<svg class="i" style="left:229.6px;top:1826.9px;width:36.5px;height:36.5px;"><use href="#i-gear"/></svg>
<div class="tr" style="left:268.6px;top:1825.0px;" id="tr32">LEGRAND0069</div>
<div class="tri" style="left:205.8px;top:1836.2px;border-top:11px solid transparent;border-bottom:11px solid transparent;border-left:19.500px solid #000"></div>
<svg class="i" style="left:229.6px;top:1870.1px;width:36.5px;height:36.5px;"><use href="#i-weight"/></svg>
<div class="tr" style="left:268.6px;top:1868.2px;" id="tr33">INSERT76938</div>
<svg class="i" style="left:229.6px;top:1913.3px;width:36.5px;height:36.5px;"><use href="#i-weight"/></svg>
<div class="tr" style="left:268.6px;top:1911.4px;" id="tr34">PALLET0001</div>
<svg class="i" style="left:229.6px;top:1956.5px;width:36.5px;height:36.5px;"><use href="#i-weight"/></svg>
<div class="tr" style="left:268.6px;top:1954.6px;" id="tr35">CARTON0007</div>
<div class="abs" style="left:899px;top:370px;width:2909px;height:1668px;background:#fff;border:2px solid #dedede;border-radius:9px;"></div>
<div class="abs" style="left:3772px;top:372px;width:34px;height:1664px;background:#f1f1f1;border-radius:0 7px 7px 0"></div>
<div class="abs" style="left:3774px;top:406px;width:30px;height:861px;background:#c1c1c1"></div>
<div class="tri" style="left:3781px;top:386px;border-left:8px solid transparent;border-right:8px solid transparent;border-bottom:8px solid #a3a3a3"></div>
<div class="tri" style="left:3781px;top:2014px;border-left:8px solid transparent;border-right:8px solid transparent;border-top:8px solid #505050"></div>
<div class="abs" style="left:941px;top:494px;width:2791px;height:1542px;border:2px solid #d6dbe4;border-bottom:none;background:#fff"></div>
<div class="tab r1" style="left:942px;width:182px">Attributes</div>
<div class="tab r1" style="left:1126px;width:257px">Change Control</div>
<div class="tab r1" style="left:1385px;width:221px">Transactions</div>
<div class="tab r1" style="left:1609px;width:271px">Delivery Batches</div>
<div class="tab r1" style="left:1882px;width:173px">Forecast</div>
<div class="tab r1" style="left:2057px;width:180px">Projected</div>
<div class="tab r1" style="left:2239px;width:135px">Stock</div>
<div class="tab r1" style="left:2376px;width:206px">Lead Times</div>
<div class="tab r1" style="left:2584px;width:235px">Related Items</div>
<div class="tab r1" style="left:2821px;width:247px">Stock Postings</div>
<div class="tab r1" style="left:3070px;width:187px">Approvals</div>
<div class="tab r1" style="left:3259px;width:180px">Extra Info</div>
<div class="tab r1" style="left:3442px;width:277px">Item Configurator</div>
<div class="tab r2 act" style="left:942px;width:132px">Details</div>
<div class="tab r2" style="left:1076px;width:358px">Delivery Methods (Route)</div>
<div class="tab r2" style="left:1436px;width:162px">Suppliers</div>
<div class="tab r2" style="left:1600px;width:179px">Customers</div>
<div class="tab r2" style="left:1782px;width:198px">Sales Prices</div>
<div class="tab r2" style="left:1982px;width:197px">Quick Costs</div>
<div class="tab r2" style="left:2181px;width:241px">Price Calculator</div>
<div class="tab r2" style="left:2424px;width:186px">Documents</div>
<div class="tab r2" style="left:2612px;width:119px">Notes</div>
<div class="tab r2" style="left:2733px;width:137px">Images</div>
<div class="tab r2" style="left:2872px;width:174px">Messages</div>
<div class="tab r2" style="left:3048px;width:242px">Extended Fields</div>
<div class="tab r2" style="left:3292px;width:190px">Spare Parts</div>
<div class="tab r2" style="left:3485px;width:165px">Locations</div>
<div class="abs" style="left:949px;top:516.5px;width:2775px;height:1477.5px;border:6px double #c9cfd8"></div>
<div class="leg" style="left:965px;top:502px;width:72px;height:39px"></div>
<div class="legt" style="left:974.29px;top:503.5px;font-size:24.5px;letter-spacing:1.645px;">Item</div>
<div class="abs" style="left:949px;top:2014px;width:2775px;height:22px;border:6px double #c9cfd8;border-bottom:none"></div>
<div class="leg" style="left:965px;top:2000px;width:136px;height:36px;z-index:2"></div>
<div class="legt" style="left:975.23px;top:2001.0px;font-size:24.5px;letter-spacing:0.779px;z-index:3;">Stock Info</div>
<div class="abs" style="left:890px;top:2038px;width:2930px;height:30px;background:#f9fafd"></div>
<div class="lbl" style="left:967.17px;top:556.5px;font-size:30.5px;letter-spacing:1.084px;">Code</div>
<div class="lbl" style="left:966.22px;top:608.5px;font-size:30.5px;letter-spacing:1.074px;">Description</div>
<div class="lbl" style="left:967.17px;top:660.5px;font-size:30.5px;letter-spacing:0.734px;">Group Code</div>
<div class="fld" style="left:1341.0px;top:654.0px;width:996.2px;"></div>
<div class="fv" style="left:1343.47px;top:661.4px;font-size:27.2px;letter-spacing:0.354px;">MANUFACTURED</div>
<svg class="i" style="left:2303.7px;top:668.0px;width:26.5px;height:24.5px;"><use href="#i-table"/></svg>
<svg class="i" style="left:2272.2px;top:667.5px;width:25.0px;height:25.0px;"><use href="#i-plus"/></svg>
<svg class="i" style="left:2241.2px;top:668.0px;width:24.2px;height:24.2px;"><use href="#i-down"/></svg>
<div class="lbl" style="left:967.17px;top:712.5px;font-size:30.5px;letter-spacing:1.182px;">Category</div>
<div class="fld" style="left:1341.0px;top:706.0px;width:996.2px;"></div>
<svg class="i" style="left:2303.7px;top:720.0px;width:26.5px;height:24.5px;"><use href="#i-table"/></svg>
<svg class="i" style="left:2272.2px;top:719.5px;width:25.0px;height:25.0px;"><use href="#i-plus"/></svg>
<svg class="i" style="left:2241.2px;top:720.0px;width:24.2px;height:24.2px;"><use href="#i-down"/></svg>
<div class="lbl" style="left:967.17px;top:764.5px;font-size:30.5px;letter-spacing:0.628px;">Classification</div>
<div class="fld" style="left:1341.0px;top:758.0px;width:996.2px;"></div>
<svg class="i" style="left:2303.7px;top:772.0px;width:26.5px;height:24.5px;"><use href="#i-table"/></svg>
<svg class="i" style="left:2272.2px;top:771.5px;width:25.0px;height:25.0px;"><use href="#i-plus"/></svg>
<svg class="i" style="left:2241.2px;top:772.0px;width:24.2px;height:24.2px;"><use href="#i-down"/></svg>
<div class="lbl" style="left:968.12px;top:816.5px;font-size:30.5px;letter-spacing:0.697px;">Type</div>
<div class="fld" style="left:1341.0px;top:810.0px;width:996.2px;"></div>
<div class="fv" style="left:1343.47px;top:817.4px;font-size:27.2px;letter-spacing:0.985px;">Manufactured</div>
<svg class="i" style="left:2305.7px;top:824.0px;width:24.2px;height:24.2px;"><use href="#i-down"/></svg>
<div class="lbl" style="left:966.22px;top:868.5px;font-size:30.5px;letter-spacing:1.598px;">Drawing No</div>
<div class="fld" style="left:1341.0px;top:862.0px;width:996.2px;"></div>
<svg class="i" style="left:2303.7px;top:876.0px;width:26.5px;height:24.5px;"><use href="#i-table"/></svg>
<svg class="i" style="left:2272.2px;top:875.5px;width:25.0px;height:25.0px;"><use href="#i-plus"/></svg>
<svg class="i" style="left:2241.2px;top:876.0px;width:24.2px;height:24.2px;"><use href="#i-down"/></svg>
<div class="lbl" style="left:966.22px;top:920.5px;font-size:30.5px;letter-spacing:1.012px;">Drawing Revision</div>
<div class="fld" style="left:1341.0px;top:914.0px;width:996.2px;"></div>
<svg class="i" style="left:2303.7px;top:928.0px;width:26.5px;height:24.5px;"><use href="#i-table"/></svg>
<svg class="i" style="left:2272.2px;top:927.5px;width:25.0px;height:25.0px;"><use href="#i-plus"/></svg>
<svg class="i" style="left:2241.2px;top:928.0px;width:24.2px;height:24.2px;"><use href="#i-down"/></svg>
<div class="lbl" style="left:967.65px;top:972.5px;font-size:30.5px;letter-spacing:0.457px;">Scrap Type</div>
<div class="fld" style="left:1341.0px;top:966.0px;width:996.2px;"></div>
<svg class="i" style="left:2303.7px;top:980.0px;width:26.5px;height:24.5px;"><use href="#i-table"/></svg>
<svg class="i" style="left:2272.2px;top:979.5px;width:25.0px;height:25.0px;"><use href="#i-plus"/></svg>
<svg class="i" style="left:2241.2px;top:980.0px;width:24.2px;height:24.2px;"><use href="#i-down"/></svg>
<div class="lbl" style="left:967.17px;top:1024.5px;font-size:30.5px;letter-spacing:0.466px;">Cost Price</div>
<div class="fld" style="left:1341.0px;top:1018.0px;width:996.2px;"></div>
<div class="fv" style="left:1344.75px;top:1025.5px;font-size:27.2px;letter-spacing:1.584px;">0.00000</div>
<svg class="i" style="left:2307.5px;top:1030.8px;width:20.1px;height:26.0px;"><use href="#i-calc"/></svg>
<div class="lbl" style="left:967.17px;top:1076.5px;font-size:30.5px;letter-spacing:0.504px;">Cost Per</div>
<div class="lbl" style="left:967.65px;top:1128.5px;font-size:30.5px;letter-spacing:0.063px;">Sales Price</div>
<div class="fld" style="left:1341.0px;top:1122.0px;width:996.2px;"></div>
<div class="fv" style="left:1344.75px;top:1129.5px;font-size:27.2px;letter-spacing:1.584px;">0.00000</div>
<svg class="i" style="left:2307.5px;top:1134.8px;width:20.1px;height:26.0px;"><use href="#i-calc"/></svg>
<div class="lbl" style="left:968.12px;top:1180.5px;font-size:30.5px;letter-spacing:0.488px;">Traceability</div>
<div class="fld" style="left:1341.0px;top:1174.0px;width:996.2px;"></div>
<div class="fv" style="left:1343.47px;top:1181.5px;font-size:27.2px;letter-spacing:0.702px;">By Location</div>
<svg class="i" style="left:2305.7px;top:1188.0px;width:24.2px;height:24.2px;"><use href="#i-down"/></svg>
<div class="lbl" style="left:967.17px;top:1232.5px;font-size:30.5px;letter-spacing:1.082px;">Cost Method</div>
<div class="fld" style="left:1341.0px;top:1226.0px;width:996.2px;"></div>
<div class="fv" style="left:1345.60px;top:1233.5px;font-size:27.2px;letter-spacing:0.939px;">Actual</div>
<svg class="i" style="left:2305.7px;top:1240.0px;width:24.2px;height:24.2px;"><use href="#i-down"/></svg>
<div class="lbl" style="left:967.65px;top:1284.5px;font-size:30.5px;letter-spacing:0.811px;">Specification</div>
<div class="fld" style="left:1341.0px;top:1278.0px;width:996.2px;"></div>
<svg class="i" style="left:2303.7px;top:1292.0px;width:26.5px;height:24.5px;"><use href="#i-table"/></svg>
<svg class="i" style="left:2272.2px;top:1291.5px;width:25.0px;height:25.0px;"><use href="#i-plus"/></svg>
<svg class="i" style="left:2241.2px;top:1292.0px;width:24.2px;height:24.2px;"><use href="#i-down"/></svg>
<div class="lbl" style="left:967.17px;top:1336.5px;font-size:30.5px;letter-spacing:0.540px;">CPC Code</div>
<div class="fld" style="left:1341.0px;top:1330.0px;width:996.2px;"></div>
<svg class="i" style="left:2303.7px;top:1344.0px;width:26.5px;height:24.5px;"><use href="#i-table"/></svg>
<svg class="i" style="left:2272.2px;top:1343.5px;width:25.0px;height:25.0px;"><use href="#i-plus"/></svg>
<svg class="i" style="left:2241.2px;top:1344.0px;width:24.2px;height:24.2px;"><use href="#i-down"/></svg>
<div class="fld" style="left:1341.0px;top:550.0px;width:2323.0px;"></div>
<div class="fv" style="left:1343.47px;top:557.4px;font-size:27.2px;letter-spacing:0.922px;">LEGRAND0069</div>
<div class="abs" style="left:3665px;top:550px;width:43px;height:51px;border-radius:7px;background:#fafbfe"></div>
<svg class="i" style="left:3668.5px;top:559.5px;width:32.0px;height:32.0px;"><use href="#i-gridbtn"/></svg>
<div class="fld" style="left:1341.0px;top:602.0px;width:2366.8px;"></div>
<div class="fv" style="left:1345.60px;top:609.4px;font-size:27.2px;letter-spacing:0.506px;">ACT-1F Frame</div>
<div class="fld" style="left:1341.0px;top:1070.0px;width:448.0px;"></div>
<div class="fv" style="left:1345.17px;top:1077.5px;font-size:27.2px;letter-spacing:1.054px;">Tonne</div>
<svg class="i" style="left:1757.5px;top:1084.0px;width:24.2px;height:24.2px;"><use href="#i-down"/></svg>
<div class="fld" style="left:1796.0px;top:1070.0px;width:541.2px;"></div>
<div class="fv" style="left:1799.75px;top:1077.5px;font-size:27.2px;letter-spacing:1.584px;">0.00000</div>
<svg class="i" style="left:2307.5px;top:1082.8px;width:20.1px;height:26.0px;"><use href="#i-calc"/></svg>
<div class="lbl" style="left:2339.45px;top:660.5px;font-size:30.5px;letter-spacing:0.757px;">Supplier</div>
<div class="fld" style="left:2713.0px;top:654.0px;width:994.8px;"></div>
<svg class="i" style="left:3674.3px;top:668.0px;width:26.5px;height:24.5px;"><use href="#i-table"/></svg>
<svg class="i" style="left:3642.8px;top:667.5px;width:25.0px;height:25.0px;"><use href="#i-plus"/></svg>
<svg class="i" style="left:3611.8px;top:668.0px;width:24.2px;height:24.2px;"><use href="#i-down"/></svg>
<div class="lbl" style="left:2339.45px;top:712.5px;font-size:30.5px;letter-spacing:0.778px;">Supplier Item</div>
<div class="fld" style="left:2713.0px;top:706.0px;width:994.8px;"></div>
<svg class="i" style="left:3674.3px;top:720.0px;width:26.5px;height:24.5px;"><use href="#i-table"/></svg>
<svg class="i" style="left:3642.8px;top:719.5px;width:25.0px;height:25.0px;"><use href="#i-plus"/></svg>
<svg class="i" style="left:3611.8px;top:720.0px;width:24.2px;height:24.2px;"><use href="#i-down"/></svg>
<div class="lbl" style="left:2338.02px;top:764.5px;font-size:30.5px;letter-spacing:1.013px;">Manufacturer</div>
<div class="fld" style="left:2713.0px;top:758.0px;width:994.8px;"></div>
<svg class="i" style="left:3674.3px;top:772.0px;width:26.5px;height:24.5px;"><use href="#i-table"/></svg>
<svg class="i" style="left:3642.8px;top:771.5px;width:25.0px;height:25.0px;"><use href="#i-plus"/></svg>
<svg class="i" style="left:3611.8px;top:772.0px;width:24.2px;height:24.2px;"><use href="#i-down"/></svg>
<div class="lbl" style="left:2338.02px;top:816.5px;font-size:30.5px;letter-spacing:0.823px;">Manufacturers Code</div>
<div class="fld" style="left:2713.0px;top:810.0px;width:994.8px;"></div>
<div class="lbl" style="left:2339.45px;top:868.5px;font-size:30.5px;letter-spacing:0.685px;">Stock Location</div>
<div class="fld" style="left:2713.0px;top:862.0px;width:994.8px;"></div>
<svg class="i" style="left:3674.3px;top:876.0px;width:26.5px;height:24.5px;"><use href="#i-table"/></svg>
<svg class="i" style="left:3642.8px;top:875.5px;width:25.0px;height:25.0px;"><use href="#i-plus"/></svg>
<svg class="i" style="left:3611.8px;top:876.0px;width:24.2px;height:24.2px;"><use href="#i-down"/></svg>
<div class="lbl" style="left:2338.02px;top:920.5px;font-size:30.5px;letter-spacing:0.609px;">Reserve Location</div>
<div class="fld" style="left:2713.0px;top:914.0px;width:994.8px;"></div>
<svg class="i" style="left:3674.3px;top:928.0px;width:26.5px;height:24.5px;"><use href="#i-table"/></svg>
<svg class="i" style="left:3642.8px;top:927.5px;width:25.0px;height:25.0px;"><use href="#i-plus"/></svg>
<svg class="i" style="left:3611.8px;top:928.0px;width:24.2px;height:24.2px;"><use href="#i-down"/></svg>
<div class="lbl" style="left:2338.02px;top:972.5px;font-size:30.5px;letter-spacing:0.211px;">Lock Sales Price</div>
<div class="cb" style="left:2715.0px;top:978.0px"></div>
<div class="lbl" style="left:2338.02px;top:1024.5px;font-size:30.5px;letter-spacing:0.198px;">Min. Sales Price</div>
<div class="fld" style="left:2713.0px;top:1018.0px;width:994.8px;"></div>
<div class="fv" style="left:2716.75px;top:1025.5px;font-size:27.2px;letter-spacing:1.584px;">0.00000</div>
<svg class="i" style="left:3678.1px;top:1030.8px;width:20.1px;height:26.0px;"><use href="#i-calc"/></svg>
<div class="lbl" style="left:2338.02px;top:1076.5px;font-size:30.5px;letter-spacing:0.352px;">Min. Sales Qty</div>
<div class="fld" style="left:2713.0px;top:1070.0px;width:994.8px;"></div>
<div class="fv" style="left:2716.75px;top:1077.5px;font-size:27.2px;letter-spacing:1.584px;">0.00000</div>
<svg class="i" style="left:3678.1px;top:1082.8px;width:20.1px;height:26.0px;"><use href="#i-calc"/></svg>
<div class="lbl" style="left:2340.40px;top:1128.5px;font-size:30.5px;letter-spacing:0.781px;">Volume</div>
<div class="fld" style="left:2713.0px;top:1122.0px;width:994.8px;"></div>
<div class="fv" style="left:2716.75px;top:1129.5px;font-size:27.2px;letter-spacing:1.584px;">0.00000</div>
<svg class="i" style="left:3678.1px;top:1134.8px;width:20.1px;height:26.0px;"><use href="#i-calc"/></svg>
<div class="lbl" style="left:2340.40px;top:1180.5px;font-size:30.5px;letter-spacing:1.764px;">Weight</div>
<div class="fld" style="left:2713.0px;top:1174.0px;width:951.0px;"></div>
<div class="fv" style="left:2716.75px;top:1181.5px;font-size:27.2px;letter-spacing:1.584px;">0.00000</div>
<svg class="i" style="left:3634.3px;top:1186.8px;width:20.1px;height:26.0px;"><use href="#i-calc"/></svg>
<div class="abs" style="left:3665px;top:1175.0px;width:43px;height:49px;border-radius:7px;background:#fafbfe"></div>
<svg class="i" style="left:3665.5px;top:1180.5px;width:36.7px;height:36.7px;"><use href="#i-weight"/></svg>
<div class="lbl" style="left:2339.45px;top:1232.5px;font-size:30.5px;letter-spacing:0.664px;">Surface Area UOM</div>
<div class="fld" style="left:2713.0px;top:1226.0px;width:994.8px;"></div>
<div class="fv" style="left:2716.75px;top:1233.5px;font-size:27.2px;letter-spacing:1.584px;">0.00000</div>
<svg class="i" style="left:3678.1px;top:1238.8px;width:20.1px;height:26.0px;"><use href="#i-calc"/></svg>
<div class="lbl" style="left:2338.02px;top:1284.5px;font-size:30.5px;letter-spacing:0.929px;">Predefined Material</div>
<div class="fld" style="left:2713.0px;top:1278.0px;width:994.8px;background:#e5e5e2;"></div>
<div class="lbl" style="left:2338.02px;top:1336.5px;font-size:30.5px;letter-spacing:0.892px;">BOM Planned</div>
<div class="cb on" style="left:2715.0px;top:1342.0px"></div>
<svg class="i" style="left:2715.0px;top:1342.0px;width:28px;height:28px" viewBox="0 0 28 28"><path d="M5.800,14.300 L11.600,20.200 L22.300,6.600" fill="none" stroke="#fff" stroke-width="4"/></svg>
<div class="lbl" style="left:2339.92px;top:1388.5px;font-size:30.5px;letter-spacing:0.460px;">Tasks Planned</div>
<div class="cb on" style="left:2715.0px;top:1394.0px"></div>
<svg class="i" style="left:2715.0px;top:1394.0px;width:28px;height:28px" viewBox="0 0 28 28"><path d="M5.800,14.300 L11.600,20.200 L22.300,6.600" fill="none" stroke="#fff" stroke-width="4"/></svg>
<div class="lbl" style="left:2338.02px;top:1440.5px;font-size:30.5px;letter-spacing:0.924px;">Discount Group</div>
<div class="fld" style="left:2713.0px;top:1434.0px;width:994.8px;"></div>
<svg class="i" style="left:3674.3px;top:1448.0px;width:26.5px;height:24.5px;"><use href="#i-table"/></svg>
<svg class="i" style="left:3642.8px;top:1447.5px;width:25.0px;height:25.0px;"><use href="#i-plus"/></svg>
<svg class="i" style="left:3611.8px;top:1448.0px;width:24.2px;height:24.2px;"><use href="#i-down"/></svg>
<div class="lbl" style="left:2338.97px;top:1492.5px;font-size:30.5px;letter-spacing:1.862px;">Owner</div>
<div class="fld" style="left:2713.0px;top:1486.0px;width:994.8px;"></div>
<svg class="i" style="left:3674.3px;top:1500.0px;width:26.5px;height:24.5px;"><use href="#i-table"/></svg>
<svg class="i" style="left:3642.8px;top:1499.5px;width:25.0px;height:25.0px;"><use href="#i-plus"/></svg>
<svg class="i" style="left:3611.8px;top:1500.0px;width:24.2px;height:24.2px;"><use href="#i-down"/></svg>
<div class="lbl" style="left:2339.45px;top:1544.5px;font-size:30.5px;letter-spacing:1.168px;">Status</div>
<div class="fld" style="left:2713.0px;top:1538.0px;width:994.8px;"></div>
<svg class="i" style="left:3674.3px;top:1552.0px;width:26.5px;height:24.5px;"><use href="#i-table"/></svg>
<svg class="i" style="left:3642.8px;top:1551.5px;width:25.0px;height:25.0px;"><use href="#i-plus"/></svg>
<svg class="i" style="left:3611.8px;top:1552.0px;width:24.2px;height:24.2px;"><use href="#i-down"/></svg>
<div class="lbl" style="left:2340.40px;top:1596.5px;font-size:30.5px;letter-spacing:1.055px;">Warranty Type</div>
<div class="fld" style="left:2713.0px;top:1590.0px;width:994.8px;"></div>
<svg class="i" style="left:3674.3px;top:1604.0px;width:26.5px;height:24.5px;"><use href="#i-table"/></svg>
<svg class="i" style="left:3642.8px;top:1603.5px;width:25.0px;height:25.0px;"><use href="#i-plus"/></svg>
<svg class="i" style="left:3611.8px;top:1604.0px;width:24.2px;height:24.2px;"><use href="#i-down"/></svg>
<div class="lbl" style="left:2338.97px;top:1648.5px;font-size:30.5px;letter-spacing:0.938px;">Country of Origin</div>
<div class="fld" style="left:2713.0px;top:1642.0px;width:994.8px;"></div>
<svg class="i" style="left:3674.3px;top:1656.0px;width:26.5px;height:24.5px;"><use href="#i-table"/></svg>
<svg class="i" style="left:3642.8px;top:1655.5px;width:25.0px;height:25.0px;"><use href="#i-plus"/></svg>
<svg class="i" style="left:3611.8px;top:1656.0px;width:24.2px;height:24.2px;"><use href="#i-down"/></svg>
<div class="lbl" style="left:2338.02px;top:1700.5px;font-size:30.5px;letter-spacing:0.731px;">Lead Time</div>
<div class="fld" style="left:2713.0px;top:1694.0px;width:994.8px;"></div>
<div class="fv" style="left:2716.75px;top:1701.5px;font-size:27.2px;letter-spacing:0.000px;">0</div>
<svg class="i" style="left:3678.1px;top:1706.8px;width:20.1px;height:26.0px;"><use href="#i-calc"/></svg>
<div class="lbl" style="left:2339.45px;top:1752.5px;font-size:30.5px;letter-spacing:0.581px;">Supersedes</div>
<div class="fld" style="left:2713.0px;top:1746.0px;width:994.8px;"></div>
<svg class="i" style="left:3674.3px;top:1760.0px;width:26.5px;height:24.5px;"><use href="#i-table"/></svg>
<svg class="i" style="left:3642.8px;top:1759.5px;width:25.0px;height:25.0px;"><use href="#i-plus"/></svg>
<svg class="i" style="left:3611.8px;top:1760.0px;width:24.2px;height:24.2px;"><use href="#i-down"/></svg>
<div class="lbl" style="left:2339.45px;top:1804.5px;font-size:30.5px;letter-spacing:0.807px;">Superseded by</div>
<div class="fld" style="left:2713.0px;top:1798.0px;width:994.8px;"></div>
<svg class="i" style="left:3674.3px;top:1812.0px;width:26.5px;height:24.5px;"><use href="#i-table"/></svg>
<svg class="i" style="left:3642.8px;top:1811.5px;width:25.0px;height:25.0px;"><use href="#i-plus"/></svg>
<svg class="i" style="left:3611.8px;top:1812.0px;width:24.2px;height:24.2px;"><use href="#i-down"/></svg>
<div class="lbl" style="left:967.65px;top:1388.5px;font-size:30.5px;letter-spacing:0.500px;">Serviced</div>
<div class="cb" style="left:1342.0px;top:1394.0px"></div>
<div class="lbl" style="left:1654.30px;top:1388.5px;font-size:30.5px;letter-spacing:0.956px;">Active</div>
<div class="cb on" style="left:2028.0px;top:1394.0px"></div>
<svg class="i" style="left:2028.0px;top:1394.0px;width:28px;height:28px" viewBox="0 0 28 28"><path d="M5.800,14.300 L11.600,20.200 L22.300,6.600" fill="none" stroke="#fff" stroke-width="4"/></svg>
<div class="lbl" style="left:967.65px;top:1440.5px;font-size:30.5px;letter-spacing:0.718px;">Stock Item</div>
<div class="cb" style="left:1342.0px;top:1446.0px"></div>
<div class="lbl" style="left:1654.30px;top:1440.5px;font-size:30.5px;letter-spacing:0.871px;">Auto Raise WO</div>
<div class="cb" style="left:2028.0px;top:1446.0px"></div>
<div class="lbl" style="left:966.22px;top:1492.5px;font-size:30.5px;letter-spacing:0.207px;">For Sale</div>
<div class="cb on" style="left:1342.0px;top:1498.0px"></div>
<svg class="i" style="left:1342.0px;top:1498.0px;width:28px;height:28px" viewBox="0 0 28 28"><path d="M5.800,14.300 L11.600,20.200 L22.300,6.600" fill="none" stroke="#fff" stroke-width="4"/></svg>
<div class="lbl" style="left:1654.30px;top:1492.5px;font-size:30.5px;letter-spacing:0.508px;">Auto Raise PO</div>
<div class="cb" style="left:2028.0px;top:1498.0px"></div>
<div class="lbl" style="left:966.22px;top:1544.5px;font-size:30.5px;letter-spacing:0.793px;">Exclude Valuation</div>
<div class="cb" style="left:1342.0px;top:1550.0px"></div>
<div class="lbl" style="left:1651.92px;top:1544.5px;font-size:30.5px;letter-spacing:0.880px;">New Project On Order</div>
<div class="cb" style="left:2028.0px;top:1550.0px"></div>
<div class="lbl" style="left:968.60px;top:1596.5px;font-size:30.5px;letter-spacing:0.816px;">Auto Build Stock</div>
<div class="cb" style="left:1342.0px;top:1602.0px"></div>
<div class="lbl" style="left:1654.30px;top:1596.5px;font-size:30.5px;letter-spacing:0.886px;">Allow Negative Stock</div>
<div class="cb" style="left:2028.0px;top:1602.0px"></div>
<div class="abs" style="left:971px;top:1663px;width:440px;height:309px;border:6px double #c9cfd8"></div>
<div class="leg" style="left:987px;top:1648px;width:142px;height:39px"></div>
<div class="legt" style="left:996.93px;top:1649.5px;font-size:24.5px;letter-spacing:0.849px;">Stock Intel</div>
<div class="lbl" style="left:990.30px;top:1702.6px;font-size:30.5px;letter-spacing:0.492px;">A Grade</div>
<div class="cb" style="left:1365.4px;top:1707.6px"></div>
<div class="lbl" style="left:989.35px;top:1754.8px;font-size:30.5px;letter-spacing:1.424px;">Slow</div>
<div class="cb" style="left:1365.4px;top:1759.8px"></div>
<div class="lbl" style="left:987.92px;top:1807.1px;font-size:30.5px;letter-spacing:1.904px;">Dying</div>
<div class="cb" style="left:1365.4px;top:1812.1px"></div>
<div class="lbl" style="left:987.92px;top:1859.3px;font-size:30.5px;letter-spacing:1.694px;">Dead</div>
<div class="cb" style="left:1365.4px;top:1864.3px"></div>
<div class="lbl" style="left:987.92px;top:1911.6px;font-size:30.5px;letter-spacing:0.479px;">Freeze</div>
<div class="cb" style="left:1365.4px;top:1916.6px"></div>
</div></body></html>
